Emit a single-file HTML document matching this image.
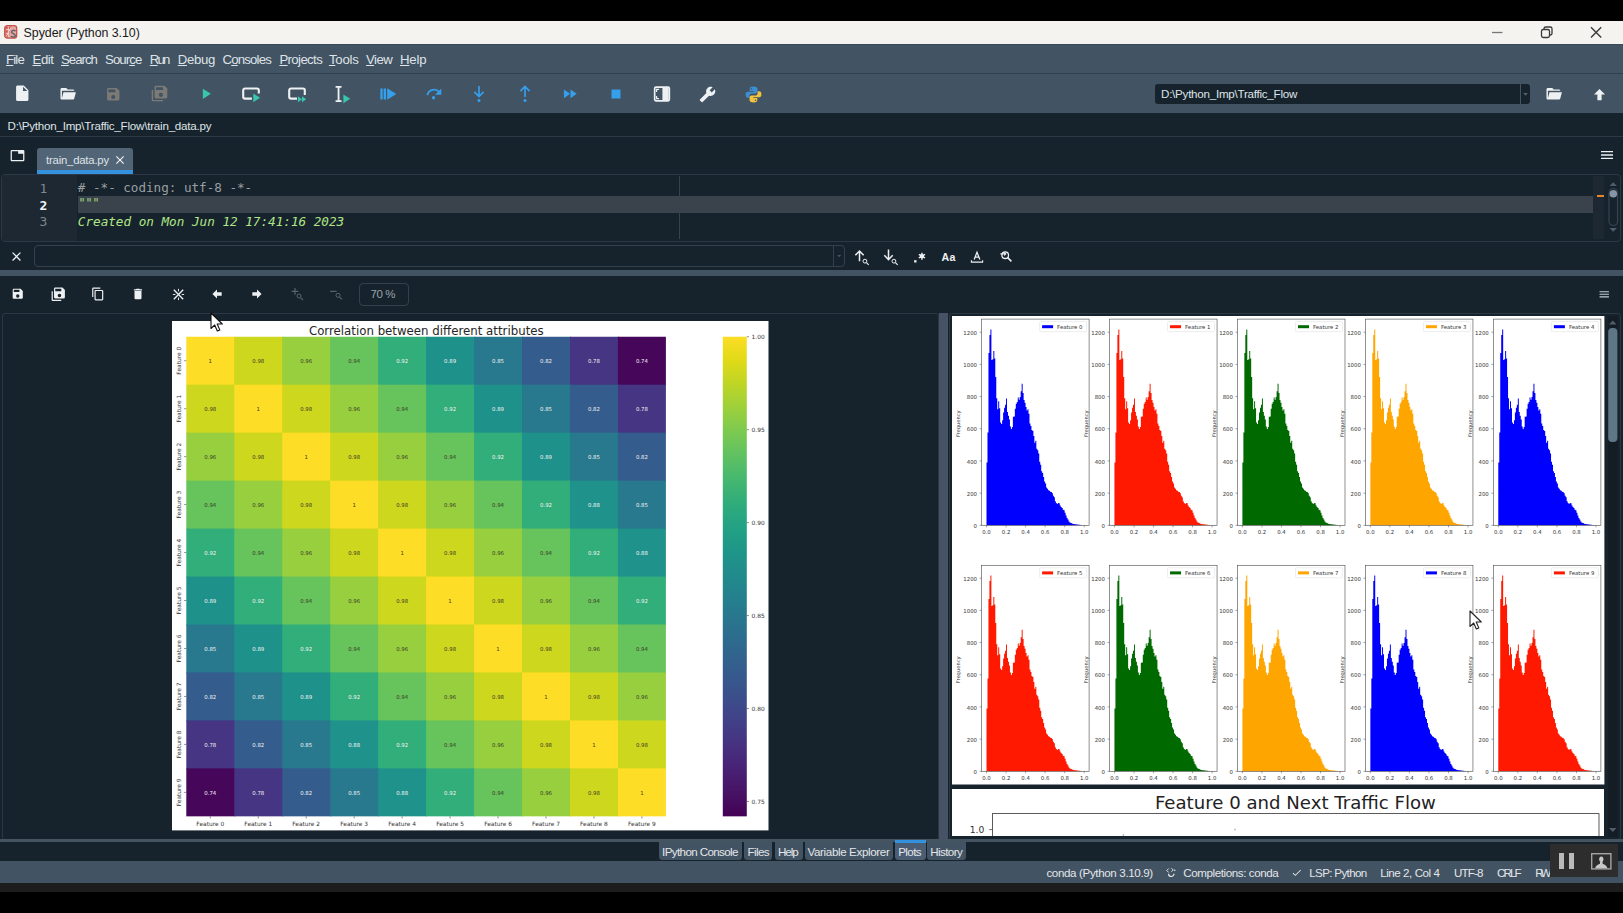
<!DOCTYPE html><html><head><meta charset="utf-8"><title>Spyder (Python 3.10)</title><style>
*{box-sizing:border-box;margin:0;padding:0}
html,body{width:1623px;height:913px;overflow:hidden;background:#000}
body{position:relative;font-family:'Liberation Sans', 'DejaVu Sans', sans-serif;font-size:12px;color:#e0e1e3}
.abs{position:absolute}
.t{position:absolute;white-space:nowrap;line-height:1}
svg{position:absolute;overflow:visible}
u{text-decoration:underline;text-underline-offset:1px}
</style></head><body><div class="abs" style="left:0px;top:20.6px;width:1623px;height:23.7px;background:#f4f3f0;"></div><div class="abs" style="left:0px;top:43.6px;width:1623px;height:0.9px;background:#fdfdfc;"></div><div class="abs" style="left:0px;top:44.3px;width:1623px;height:29.7px;background:#425363;"></div><div class="abs" style="left:0px;top:44.3px;width:1623px;height:1.2px;background:#3b4957;"></div><div class="abs" style="left:0px;top:73px;width:1623px;height:1.4px;background:#30404f;"></div><div class="abs" style="left:0px;top:74.4px;width:1623px;height:38.7px;background:#425363;"></div><div class="abs" style="left:0px;top:113px;width:1623px;height:748.5px;background:#17232c;"></div><div class="abs" style="left:0px;top:860.8px;width:1623px;height:22.2px;background:#425363;"></div><div class="abs" style="left:0px;top:883px;width:1623px;height:9px;background:#1d1d1d;"></div><div class="t" style="left:23.6px;top:26.7px;font-size:12.4px;color:#1a1a1a;letter-spacing:-0.046px;">Spyder (Python 3.10)</div><svg style="left:3.5px;top:25px" width="13.4" height="13.8" viewBox="0 0 13.4 13.8"><rect x="0.7" y="0.7" width="12" height="12.4" rx="2.6" fill="#e9a9a3" stroke="#c4514b" stroke-width="1.3"/><path d="M1.4 1.4H8.5L6.5 4.5L4.2 12.4H1.4Z" fill="#cf5a53"/><path d="M2 4.6H6M2 8.3H5M4.3 1.6V12M7.5 1.8L2.2 11.5" fill="none" stroke="#f6dcd9" stroke-width="0.9"/><path d="M11.6 6.1C9.6 4.6 7.200 5.4 7.600 7.200C8 9 11.400 8.600 11.300 10.600C11.200 12.300 8.500 12.500 6.800 11.200" fill="none" stroke="#666" stroke-width="1.500"/></svg><svg style="left:1480px;top:20px" width="143" height="24" viewBox="0 0 143 24" fill="none" stroke="#3a3a3a" stroke-width="1.3"><path d="M12 12.5H22.5" stroke="#777"/><rect x="61.5" y="9.5" width="8" height="8" rx="1.8"/><path d="M64 9.3V8.8A1.8 1.8 0 0 1 65.8 7H70.2A1.8 1.8 0 0 1 72 8.8V13.2A1.8 1.8 0 0 1 70.2 15H69.7"/><path d="M111 7.2L121.2 17.4M121.2 7.2L111 17.4" stroke-width="1.4"/></svg><div class="t" style="left:6.1px;top:52.9px;font-size:13.2px;color:#dfe3e7;letter-spacing:-0.857px;"><u>F</u>ile</div><div class="t" style="left:32.5px;top:52.9px;font-size:13.2px;color:#dfe3e7;letter-spacing:-0.415px;"><u>E</u>dit</div><div class="t" style="left:61px;top:52.9px;font-size:13.2px;color:#dfe3e7;letter-spacing:-0.985px;"><u>S</u>earch</div><div class="t" style="left:105px;top:52.9px;font-size:13.2px;color:#dfe3e7;letter-spacing:-0.905px;">Sour<u>c</u>e</div><div class="t" style="left:149.8px;top:52.9px;font-size:13.2px;color:#dfe3e7;letter-spacing:-1.808px;"><u>R</u>un</div><div class="t" style="left:177.8px;top:52.9px;font-size:13.2px;color:#dfe3e7;letter-spacing:-0.350px;"><u>D</u>ebug</div><div class="t" style="left:222.5px;top:52.9px;font-size:13.2px;color:#dfe3e7;letter-spacing:-0.805px;">C<u>o</u>nsoles</div><div class="t" style="left:279.4px;top:52.9px;font-size:13.2px;color:#dfe3e7;letter-spacing:-0.612px;"><u>P</u>rojects</div><div class="t" style="left:328.9px;top:52.9px;font-size:13.2px;color:#dfe3e7;letter-spacing:-0.179px;"><u>T</u>ools</div><div class="t" style="left:366.1px;top:52.9px;font-size:13.2px;color:#dfe3e7;letter-spacing:-0.558px;"><u>V</u>iew</div><div class="t" style="left:400px;top:52.9px;font-size:13.2px;color:#dfe3e7;letter-spacing:-0.216px;"><u>H</u>elp</div><svg style="left:12.75px;top:84.45px" width="18.5" height="18.5" viewBox="0 0 24 24"><path d="M13,9V3.5L18.5,9M6,2C4.89,2 4,2.89 4,4V20A2,2 0 0,0 6,22H18A2,2 0 0,0 20,20V8L14,2H6Z" fill="#eef1f3" /></svg><svg style="left:59.25px;top:85.25px" width="17.5" height="17.5" viewBox="0 0 24 24"><path d="M19,20H4C2.89,20 2,19.1 2,18V6C2,4.89 2.89,4 4,4H10L12,6H19A2,2 0 0,1 21,8H21L4,8V18L6.14,10H23.21L20.93,18.5C20.7,19.37 19.92,20 19,20Z" fill="#eef1f3" /></svg><svg style="left:104.75px;top:85.75px" width="16.5" height="16.5" viewBox="0 0 24 24"><path d="M15,9H5V5H15M12,19A3,3 0 0,1 9,16A3,3 0 0,1 12,13A3,3 0 0,1 15,16A3,3 0 0,1 12,19M17,3H5C3.89,3 3,3.9 3,5V19A2,2 0 0,0 5,21H19A2,2 0 0,0 21,19V7L17,3Z" fill="#7b7a75" /></svg><svg style="left:150.5px;top:85px" width="17" height="17" viewBox="0 0 24 24"><path d="M17,7V3H7V7H17M14,17A3,3 0 0,0 17,14A3,3 0 0,0 14,11A3,3 0 0,0 11,14A3,3 0 0,0 14,17M19,1L23,5V17A2,2 0 0,1 21,19H7C5.89,19 5,18.1 5,17V3A2,2 0 0,1 7,1H19M1,7H3V21H17V23H3A2,2 0 0,1 1,21V7Z" fill="#7b7a75" /></svg><svg style="left:196.55px;top:85.25px" width="17.5" height="17.5" viewBox="0 0 24 24"><path d="M8,5.14V19.14L19,12.14L8,5.14Z" fill="#38c6ad" /></svg><svg style="left:240px;top:83px" width="22" height="22" viewBox="0 0 24 24"><path d="M13 17H5.5A2 2 0 0 1 3.5 15V8A2 2 0 0 1 5.5 6H18.5A2 2 0 0 1 20.5 8V11.5" fill="none" stroke="#eef1f3" stroke-width="2.3"/><path d="M14.5 11.5V21L22 16.2Z" fill="#38c6ad"/></svg><svg style="left:286px;top:83px" width="22" height="22" viewBox="0 0 24 24"><path d="M12 17H5.5A2 2 0 0 1 3.5 15V8A2 2 0 0 1 5.5 6H18.5A2 2 0 0 1 20.5 8V13" fill="none" stroke="#eef1f3" stroke-width="2.3"/><path d="M13 14.5V21L17.5 17.7ZM17.5 14.5V21L22 17.7Z" fill="#38c6ad"/></svg><svg style="left:331px;top:83px" width="22" height="22" viewBox="0 0 24 24"><path d="M5 4.2H11.5M5 19.8H11.5M8.25 4.2V19.8" fill="none" stroke="#eef1f3" stroke-width="2"/><path d="M13.5 12.5V22L21 17.2Z" fill="#38c6ad"/></svg><svg style="left:378px;top:84px" width="20" height="20" viewBox="0 0 24 24"><path d="M2.8 5.5H5.6V18.5H2.8ZM6.800 5.500H9.600V18.500H6.800ZM11 5V19L22 12Z" fill="#369fec"/></svg><svg style="left:424px;top:84px" width="20" height="20" viewBox="0 0 24 24"><path d="M4 13.5A8.2 8.2 0 0 1 18.5 10" fill="none" stroke="#369fec" stroke-width="2"/><path d="M20.8 5.5V13H13.3Z" fill="#369fec"/><circle cx="11.5" cy="16.5" r="2" fill="#369fec"/></svg><svg style="left:469px;top:84px" width="20" height="20" viewBox="0 0 24 24"><path d="M12 2.5V14.5M6.5 9.5L12 15L17.5 9.5" fill="none" stroke="#369fec" stroke-width="2"/><circle cx="12" cy="19.7" r="1.8" fill="#369fec"/></svg><svg style="left:515px;top:84px" width="20" height="20" viewBox="0 0 24 24"><path d="M12 15.5V3.5M6.5 8.5L12 3L17.5 8.5" fill="none" stroke="#369fec" stroke-width="2"/><circle cx="12" cy="19.7" r="1.8" fill="#369fec"/></svg><svg style="left:560.75px;top:85.25px" width="17.5" height="17.5" viewBox="0 0 24 24"><path d="M13,6V18L21.5,12M4,18L12.5,12L4,6V18Z" fill="#369fec" /></svg><svg style="left:607px;top:85px" width="18" height="18" viewBox="0 0 24 24"><path d="M18,18H6V6H18V18Z" fill="#369fec" /></svg><svg style="left:652px;top:84px" width="20" height="20" viewBox="0 0 24 24"><rect x="3.2" y="3.8" width="17.6" height="16.4" rx="1.5" fill="none" stroke="#eef1f3" stroke-width="2"/><path d="M12.5 4H20V20H12.5Z" fill="#eef1f3"/><path d="M5.5 9.5V6.5H8.5M5.5 14.5V17.5H8.5" fill="none" stroke="#eef1f3" stroke-width="1.4"/></svg><svg style="left:698.5px;top:85.5px" width="17" height="17" viewBox="0 0 24 24"><g transform="translate(24,0) scale(-1,1)"><path d="M22.7,19L13.6,9.9C14.5,7.6 14,4.9 12.1,3C10.1,1 7.1,0.6 4.7,1.7L9,6L6,9L1.6,4.7C0.4,7.1 0.9,10.1 2.9,12.1C4.8,14 7.5,14.5 9.8,13.6L18.9,22.7C19.3,23.1 19.9,23.1 20.3,22.7L22.6,20.4C23.1,20 23.1,19.3 22.7,19Z" fill="#eef1f3" /></g></svg><svg style="left:743.5px;top:84.5px" width="19" height="19" viewBox="0 0 24 24"><path d="M11.8 2C8 2 7.2 3.4 7.2 5.2V7.6H12.2V8.6H4.8C3 8.600 2 10.2 2 12.4C2 14.6 3 16.200 4.800 16.200H6.800V13.6C6.800 11.8 8.200 10.600 10 10.600H14.6C16 10.600 17 9.600 17 8.200V5.200C17 3.400 15.600 2 11.800 2Z" fill="#3d8fd1"/><path d="M12.200 22C16 22 16.800 20.600 16.800 18.800V16.400H11.800V15.400H19.200C21 15.400 22 13.800 22 11.600C22 9.400 21 7.800 19.200 7.800H17.200V10.400C17.200 12.200 15.800 13.400 14 13.400H9.400C8 13.400 7 14.400 7 15.800V18.800C7 20.600 8.400 22 12.200 22Z" fill="#f2c33c"/><circle cx="9.500" cy="4.800" r="0.900" fill="#455364"/><circle cx="14.500" cy="19.200" r="0.900" fill="#455364"/></svg><div class="abs" style="left:1154.8px;top:83.5px;width:375.7px;height:20.5px;background:#17232c;border-radius:3px"></div><div class="abs" style="left:1520px;top:84px;width:1px;height:19.5px;background:#455364;"></div><svg style="left:1523px;top:92.5px" width="5" height="3" viewBox="0 0 6 4"><path d="M0 0H6L3 3.6Z" fill="#566371"/></svg><div class="t" style="left:1161px;top:88.2px;font-size:11.6px;color:#dfe3e7;letter-spacing:-0.243px;">D:\Python_Imp\Traffic_Flow</div><svg style="left:1545.25px;top:85.25px" width="17.5" height="17.5" viewBox="0 0 24 24"><path d="M19,20H4C2.89,20 2,19.1 2,18V6C2,4.89 2.89,4 4,4H10L12,6H19A2,2 0 0,1 21,8H21L4,8V18L6.14,10H23.21L20.93,18.5C20.7,19.37 19.92,20 19,20Z" fill="#eef1f3" /></svg><svg style="left:1590.5px;top:86px" width="17" height="17" viewBox="0 0 24 24"><path d="M15,20H9V12H4.16L12,4.16L19.84,12H15V20Z" fill="#eef1f3" /></svg><div class="t" style="left:7.5px;top:120px;font-size:11.6px;color:#dfe3e7;letter-spacing:-0.220px;">D:\Python_Imp\Traffic_Flow\train_data.py</div><div class="abs" style="left:0px;top:136px;width:1623px;height:1px;background:#2c3844;"></div><svg style="left:10px;top:147.5px" width="15" height="15" viewBox="0 0 24 24"><path d="M3,3H21A2,2 0 0,1 23,5V19A2,2 0 0,1 21,21H3A2,2 0 0,1 1,19V5A2,2 0 0,1 3,3M3,5V19H21V9H13V5H3Z" fill="#eef1f3" /></svg><div class="abs" style="left:37.2px;top:148px;width:95.8px;height:25.8px;background:#526577;border-radius:3px 3px 0 0"></div><div class="abs" style="left:37.2px;top:169.8px;width:95.8px;height:4px;background:#3391de;"></div><div class="t" style="left:46px;top:154.65px;font-size:11.3px;color:#dfe3e7;letter-spacing:-0.186px;">train_data.py</div><svg style="left:113px;top:153px" width="14" height="14" viewBox="0 0 24 24"><path d="M19,6.41L17.59,5L12,10.59L6.41,5L5,6.41L10.59,12L5,17.59L6.41,19L12,13.41L17.59,19L19,17.59L13.41,12L19,6.41Z" fill="#eef1f3" /></svg><svg style="left:1599px;top:147px" width="16" height="16" viewBox="0 0 24 24"><path d="M3,6H21V8H3V6M3,11H21V13H3V11M3,16H21V18H3V16Z" fill="#eef1f3" /></svg><div class="abs" style="left:1px;top:173.8px;width:1619.5px;height:67.8px;background:#17232c;border:1px solid #2c3945;border-radius:4px"></div><div class="abs" style="left:2px;top:174.8px;width:74.8px;height:65.8px;background:#1d2832;border-radius:3px 0 0 3px"></div><div class="abs" style="left:77.5px;top:196px;width:1515.5px;height:17.2px;background:#3a434b;"></div><div class="abs" style="left:1593.3px;top:176px;width:11.2px;height:63px;background:#1e2832;"></div><div class="abs" style="left:1596.5px;top:195px;width:7px;height:2.2px;background:#e8862c;"></div><div class="abs" style="left:679px;top:176px;width:1px;height:63px;background:#37424d;"></div><svg style="left:1606px;top:177px" width="14" height="62" viewBox="0 0 14 62"><path d="M3.5 9L7.2 5.2L10.900 9Z" fill="#4f5d6b"/><path d="M3.500 51L7.200 54.800L10.900 51Z" fill="#4f5d6b"/><rect x="3" y="11.500" width="8.600" height="37" rx="4" fill="none" stroke="#3c4956" stroke-width="1"/><circle cx="7.300" cy="16.800" r="3.800" fill="#8595a4"/></svg><div class="t" style="left:39.5px;top:181.8px;font-size:13px;color:#7d8791;font-family:'DejaVu Sans Mono', 'Liberation Mono', monospace;font-weight:normal">1</div><div class="t" style="left:39.5px;top:198.5px;font-size:13px;color:#f4f6f7;font-family:'DejaVu Sans Mono', 'Liberation Mono', monospace;font-weight:bold">2</div><div class="t" style="left:39.5px;top:215.4px;font-size:13px;color:#7d8791;font-family:'DejaVu Sans Mono', 'Liberation Mono', monospace;font-weight:normal">3</div><div class="t" style="left:77.8px;top:182.3px;font-size:12.6px;color:#9a9fa3;font-family:'DejaVu Sans Mono', 'Liberation Mono', monospace;"># -*- coding: utf-8 -*-</div><div class="t" style="left:78.5px;top:197.8px;font-size:11.6px;color:#a4d77d;font-family:'DejaVu Sans Mono', 'Liberation Mono', monospace;font-style:italic">&quot;&quot;&quot;</div><div class="t" style="left:77.8px;top:215.875px;font-size:12.65px;color:#b0e686;font-family:'DejaVu Sans Mono', 'Liberation Mono', monospace;font-style:italic">Created on Mon Jun 12 17:41:16 2023</div><svg style="left:8.5px;top:249px" width="15" height="15" viewBox="0 0 24 24"><path d="M19,6.41L17.59,5L12,10.59L6.41,5L5,6.41L10.59,12L5,17.59L6.41,19L12,13.41L17.59,19L19,17.59L13.41,12L19,6.41Z" fill="#eef1f3" /></svg><div class="abs" style="left:34px;top:245px;width:811px;height:22px;background:#17232c;border:1px solid #33404d;border-radius:4px"></div><div class="abs" style="left:833px;top:246px;width:1px;height:20px;background:#33404d;"></div><svg style="left:837.2px;top:255.3px" width="4.4" height="2.6" viewBox="0 0 6 4"><path d="M0 0H6L3 3.600Z" fill="#4b5764"/></svg><svg style="left:851.5px;top:246.5px" width="20" height="20" viewBox="0 0 24 24"><path d="M9 17V5M4 10L9 4.800L14 10" fill="none" stroke="#eef1f3" stroke-width="1.800"/><circle cx="15.500" cy="17" r="2.300" fill="none" stroke="#eef1f3" stroke-width="1.200"/><path d="M17.300 18.800L20 21.500" stroke="#eef1f3" stroke-width="1.300"/></svg><svg style="left:880.5px;top:246.5px" width="20" height="20" viewBox="0 0 24 24"><path d="M9 3V15M4 10L9 15.200L14 10" fill="none" stroke="#eef1f3" stroke-width="1.800"/><circle cx="15.500" cy="17" r="2.300" fill="none" stroke="#eef1f3" stroke-width="1.200"/><path d="M17.300 18.800L20 21.500" stroke="#eef1f3" stroke-width="1.300"/></svg><svg style="left:910px;top:246.5px" width="20" height="20" viewBox="0 0 24 24"><circle cx="14.300" cy="11" r="2.600" fill="#eef1f3"/><path d="M14.300 6.800V15.200M10.600 8.900L18 13.100M10.600 13.100L18 8.900" stroke="#eef1f3" stroke-width="1.700"/><rect x="5" y="15.800" width="2.800" height="2.800" fill="#eef1f3"/></svg><div class="t" style="left:941.6px;top:251.7px;font-size:10.6px;color:#eef1f3;font-weight:bold;letter-spacing:0.200px">Aa</div><svg style="left:967px;top:246.5px" width="20" height="20" viewBox="0 0 24 24"><path d="M5.300 15.800V18.200H18.700V15.800" fill="none" stroke="#eef1f3" stroke-width="1.400"/><path d="M8.600 15L12 6.300L15.400 15M9.800 12.200H14.200" fill="none" stroke="#eef1f3" stroke-width="1.500"/></svg><svg style="left:998.25px;top:247.75px" width="16.5" height="16.5" viewBox="0 0 24 24"><circle cx="10.500" cy="10.500" r="4.800" fill="none" stroke="#eef1f3" stroke-width="1.900"/><path d="M14 14L19.500 19.500" stroke="#eef1f3" stroke-width="2.200"/><path d="M3.500 7.500H9V5L12.500 8.500L9 12V9.500H3.500Z" fill="#eef1f3"/></svg><div class="abs" style="left:0px;top:270.4px;width:1623px;height:6px;background:#425363;"></div><svg style="left:11.25px;top:287.25px" width="13.5" height="13.5" viewBox="0 0 24 24"><path d="M15,9H5V5H15M12,19A3,3 0 0,1 9,16A3,3 0 0,1 12,13A3,3 0 0,1 15,16A3,3 0 0,1 12,19M17,3H5C3.89,3 3,3.9 3,5V19A2,2 0 0,0 5,21H19A2,2 0 0,0 21,19V7L17,3Z" fill="#eef1f3" /></svg><svg style="left:50.75px;top:286.75px" width="14.5" height="14.5" viewBox="0 0 24 24"><path d="M17,7V3H7V7H17M14,17A3,3 0 0,0 17,14A3,3 0 0,0 14,11A3,3 0 0,0 11,14A3,3 0 0,0 14,17M19,1L23,5V17A2,2 0 0,1 21,19H7C5.89,19 5,18.1 5,17V3A2,2 0 0,1 7,1H19M1,7H3V21H17V23H3A2,2 0 0,1 1,21V7Z" fill="#eef1f3" /></svg><svg style="left:91px;top:287px" width="14" height="14" viewBox="0 0 24 24"><path d="M19,21H8V7H19M19,5H8A2,2 0 0,0 6,7V21A2,2 0 0,0 8,23H19A2,2 0 0,0 21,21V7A2,2 0 0,0 19,5M16,1H4A2,2 0 0,0 2,3V17H4V3H16V1Z" fill="#eef1f3" /></svg><svg style="left:131px;top:287px" width="14" height="14" viewBox="0 0 24 24"><path d="M19,4H15.5L14.5,3H9.5L8.5,4H5V6H19M6,19A2,2 0 0,0 8,21H16A2,2 0 0,0 18,19V7H6V19Z" fill="#eef1f3" /></svg><svg style="left:170.5px;top:286.5px" width="15" height="15" viewBox="0 0 24 24"><path d="M4.500 4.500L19.500 19.500M19.500 4.500L4.500 19.500" stroke="#eef1f3" stroke-width="2.200"/><path d="M12 3V7M12 17V21M3 12H7M17 12H21" stroke="#eef1f3" stroke-width="1.500"/></svg><svg style="left:210px;top:287px" width="14" height="14" viewBox="0 0 24 24"><path d="M20,9V15H12V19.84L4.16,12L12,4.16V9H20Z" fill="#eef1f3" /></svg><svg style="left:250px;top:287px" width="14" height="14" viewBox="0 0 24 24"><path d="M4,15V9H12V4.16L19.84,12L12,19.84V15H4Z" fill="#eef1f3" /></svg><svg style="left:289px;top:286px" width="16" height="16" viewBox="0 0 24 24"><path d="M9 3V13M4 8H14" stroke="#58636e" stroke-width="1.800"/><circle cx="15" cy="15" r="3" fill="none" stroke="#58636e" stroke-width="1.500"/><path d="M17.300 17.300L21 21" stroke="#58636e" stroke-width="1.700"/></svg><svg style="left:328px;top:286px" width="16" height="16" viewBox="0 0 24 24"><path d="M3 8H13" stroke="#58636e" stroke-width="1.800"/><circle cx="15" cy="14" r="3" fill="none" stroke="#58636e" stroke-width="1.500"/><path d="M17.300 16.300L21 20" stroke="#58636e" stroke-width="1.700"/></svg><div class="abs" style="left:359px;top:283px;width:49.5px;height:22.5px;background:#17232c;border:1px solid #33404d;border-radius:4px"></div><div class="t" style="left:370.6px;top:288.75px;font-size:11.5px;color:#98a2ac;letter-spacing:-0.471px;">70 %</div><svg style="left:1597.75px;top:287.75px" width="12.5" height="12.5" viewBox="0 0 24 24"><path d="M3,6H21V8H3V6M3,11H21V13H3V11M3,16H21V18H3V16Z" fill="#c5cbd1" /></svg><div class="abs" style="left:2px;top:312.5px;width:936.5px;height:527px;background:#17232c;border:1px solid #2b3743;border-radius:3px"></div><div class="abs" style="left:938.5px;top:313px;width:9px;height:526px;background:#455364;"></div><div class="abs" style="left:948.5px;top:312.5px;width:1672px;height:527px;background:#17232c;border:1px solid #2b3743;border-radius:3px;width:672px"></div><svg style="left:172.2px;top:321.4px" width="596.5" height="509.4" viewBox="0 0 596.5 509.4" font-family="'DejaVu Sans', 'Liberation Sans', sans-serif"><defs><linearGradient id="vir" x1="0" y1="1" x2="0" y2="0"><stop offset="0" stop-color="#440154"/><stop offset="0.05" stop-color="#471265"/><stop offset="0.1" stop-color="#482275"/><stop offset="0.15" stop-color="#463280"/><stop offset="0.2" stop-color="#414187"/><stop offset="0.25" stop-color="#3b4f8b"/><stop offset="0.3" stop-color="#355b8d"/><stop offset="0.35" stop-color="#2f678e"/><stop offset="0.4" stop-color="#2a738e"/><stop offset="0.45" stop-color="#257f8e"/><stop offset="0.5" stop-color="#218a8c"/><stop offset="0.55" stop-color="#1e9589"/><stop offset="0.6" stop-color="#22a184"/><stop offset="0.65" stop-color="#2fac7c"/><stop offset="0.7" stop-color="#44b770"/><stop offset="0.75" stop-color="#5ec162"/><stop offset="0.8" stop-color="#7ac951"/><stop offset="0.85" stop-color="#9bd03c"/><stop offset="0.9" stop-color="#bdd526"/><stop offset="0.95" stop-color="#dfda18"/><stop offset="1" stop-color="#fddd25"/></linearGradient></defs><rect x="0" y="0" width="596.5" height="509.4" fill="#fff"/><rect x="14.30" y="15.75" width="48.96" height="48.96" fill="#fddd25"/><rect x="62.26" y="15.75" width="48.96" height="48.96" fill="#cdd71d"/><rect x="110.22" y="15.75" width="48.96" height="48.96" fill="#98cf3e"/><rect x="158.18" y="15.75" width="48.96" height="48.96" fill="#67c35c"/><rect x="206.14" y="15.75" width="48.96" height="48.96" fill="#32ae7a"/><rect x="254.10" y="15.75" width="48.96" height="48.96" fill="#1f918b"/><rect x="302.06" y="15.75" width="48.96" height="48.96" fill="#28788e"/><rect x="350.02" y="15.75" width="48.96" height="48.96" fill="#345c8d"/><rect x="397.98" y="15.75" width="48.96" height="48.96" fill="#453582"/><rect x="445.94" y="15.75" width="47.96" height="48.96" fill="#46065a"/><rect x="14.30" y="63.71" width="48.96" height="48.96" fill="#cdd71d"/><rect x="62.26" y="63.71" width="48.96" height="48.96" fill="#fddd25"/><rect x="110.22" y="63.71" width="48.96" height="48.96" fill="#cdd71d"/><rect x="158.18" y="63.71" width="48.96" height="48.96" fill="#98cf3e"/><rect x="206.14" y="63.71" width="48.96" height="48.96" fill="#67c35c"/><rect x="254.10" y="63.71" width="48.96" height="48.96" fill="#32ae7a"/><rect x="302.06" y="63.71" width="48.96" height="48.96" fill="#1f918b"/><rect x="350.02" y="63.71" width="48.96" height="48.96" fill="#28788e"/><rect x="397.98" y="63.71" width="48.96" height="48.96" fill="#345c8d"/><rect x="445.94" y="63.71" width="47.96" height="48.96" fill="#453582"/><rect x="14.30" y="111.67" width="48.96" height="48.96" fill="#98cf3e"/><rect x="62.26" y="111.67" width="48.96" height="48.96" fill="#cdd71d"/><rect x="110.22" y="111.67" width="48.96" height="48.96" fill="#fddd25"/><rect x="158.18" y="111.67" width="48.96" height="48.96" fill="#cdd71d"/><rect x="206.14" y="111.67" width="48.96" height="48.96" fill="#98cf3e"/><rect x="254.10" y="111.67" width="48.96" height="48.96" fill="#67c35c"/><rect x="302.06" y="111.67" width="48.96" height="48.96" fill="#32ae7a"/><rect x="350.02" y="111.67" width="48.96" height="48.96" fill="#1f918b"/><rect x="397.98" y="111.67" width="48.96" height="48.96" fill="#28788e"/><rect x="445.94" y="111.67" width="47.96" height="48.96" fill="#345c8d"/><rect x="14.30" y="159.63" width="48.96" height="48.96" fill="#67c35c"/><rect x="62.26" y="159.63" width="48.96" height="48.96" fill="#98cf3e"/><rect x="110.22" y="159.63" width="48.96" height="48.96" fill="#cdd71d"/><rect x="158.18" y="159.63" width="48.96" height="48.96" fill="#fddd25"/><rect x="206.14" y="159.63" width="48.96" height="48.96" fill="#cdd71d"/><rect x="254.10" y="159.63" width="48.96" height="48.96" fill="#98cf3e"/><rect x="302.06" y="159.63" width="48.96" height="48.96" fill="#67c35c"/><rect x="350.02" y="159.63" width="48.96" height="48.96" fill="#32ae7a"/><rect x="397.98" y="159.63" width="48.96" height="48.96" fill="#1f928b"/><rect x="445.94" y="159.63" width="47.96" height="48.96" fill="#28788e"/><rect x="14.30" y="207.59" width="48.96" height="48.96" fill="#32ae7a"/><rect x="62.26" y="207.59" width="48.96" height="48.96" fill="#67c35c"/><rect x="110.22" y="207.59" width="48.96" height="48.96" fill="#98cf3e"/><rect x="158.18" y="207.59" width="48.96" height="48.96" fill="#cdd71d"/><rect x="206.14" y="207.59" width="48.96" height="48.96" fill="#fddd25"/><rect x="254.10" y="207.59" width="48.96" height="48.96" fill="#cdd71d"/><rect x="302.06" y="207.59" width="48.96" height="48.96" fill="#98cf3e"/><rect x="350.02" y="207.59" width="48.96" height="48.96" fill="#67c35c"/><rect x="397.98" y="207.59" width="48.96" height="48.96" fill="#32ae7a"/><rect x="445.94" y="207.59" width="47.96" height="48.96" fill="#1f928b"/><rect x="14.30" y="255.55" width="48.96" height="48.96" fill="#1f918b"/><rect x="62.26" y="255.55" width="48.96" height="48.96" fill="#32ae7a"/><rect x="110.22" y="255.55" width="48.96" height="48.96" fill="#67c35c"/><rect x="158.18" y="255.55" width="48.96" height="48.96" fill="#98cf3e"/><rect x="206.14" y="255.55" width="48.96" height="48.96" fill="#cdd71d"/><rect x="254.10" y="255.55" width="48.96" height="48.96" fill="#fddd25"/><rect x="302.06" y="255.55" width="48.96" height="48.96" fill="#cdd71d"/><rect x="350.02" y="255.55" width="48.96" height="48.96" fill="#98cf3e"/><rect x="397.98" y="255.55" width="48.96" height="48.96" fill="#67c35c"/><rect x="445.94" y="255.55" width="47.96" height="48.96" fill="#32ae7a"/><rect x="14.30" y="303.51" width="48.96" height="48.96" fill="#28788e"/><rect x="62.26" y="303.51" width="48.96" height="48.96" fill="#1f918b"/><rect x="110.22" y="303.51" width="48.96" height="48.96" fill="#32ae7a"/><rect x="158.18" y="303.51" width="48.96" height="48.96" fill="#67c35c"/><rect x="206.14" y="303.51" width="48.96" height="48.96" fill="#98cf3e"/><rect x="254.10" y="303.51" width="48.96" height="48.96" fill="#cdd71d"/><rect x="302.06" y="303.51" width="48.96" height="48.96" fill="#fddd25"/><rect x="350.02" y="303.51" width="48.96" height="48.96" fill="#cdd71d"/><rect x="397.98" y="303.51" width="48.96" height="48.96" fill="#98cf3e"/><rect x="445.94" y="303.51" width="47.96" height="48.96" fill="#67c35c"/><rect x="14.30" y="351.47" width="48.96" height="48.96" fill="#345c8d"/><rect x="62.26" y="351.47" width="48.96" height="48.96" fill="#28788e"/><rect x="110.22" y="351.47" width="48.96" height="48.96" fill="#1f918b"/><rect x="158.18" y="351.47" width="48.96" height="48.96" fill="#32ae7a"/><rect x="206.14" y="351.47" width="48.96" height="48.96" fill="#67c35c"/><rect x="254.10" y="351.47" width="48.96" height="48.96" fill="#98cf3e"/><rect x="302.06" y="351.47" width="48.96" height="48.96" fill="#cdd71d"/><rect x="350.02" y="351.47" width="48.96" height="48.96" fill="#fddd25"/><rect x="397.98" y="351.47" width="48.96" height="48.96" fill="#cdd71d"/><rect x="445.94" y="351.47" width="47.96" height="48.96" fill="#98cf3e"/><rect x="14.30" y="399.43" width="48.96" height="48.96" fill="#453582"/><rect x="62.26" y="399.43" width="48.96" height="48.96" fill="#345c8d"/><rect x="110.22" y="399.43" width="48.96" height="48.96" fill="#28788e"/><rect x="158.18" y="399.43" width="48.96" height="48.96" fill="#1f928b"/><rect x="206.14" y="399.43" width="48.96" height="48.96" fill="#32ae7a"/><rect x="254.10" y="399.43" width="48.96" height="48.96" fill="#67c35c"/><rect x="302.06" y="399.43" width="48.96" height="48.96" fill="#98cf3e"/><rect x="350.02" y="399.43" width="48.96" height="48.96" fill="#cdd71d"/><rect x="397.98" y="399.43" width="48.96" height="48.96" fill="#fddd25"/><rect x="445.94" y="399.43" width="47.96" height="48.96" fill="#cdd71d"/><rect x="14.30" y="447.39" width="48.96" height="47.96" fill="#46065a"/><rect x="62.26" y="447.39" width="48.96" height="47.96" fill="#453582"/><rect x="110.22" y="447.39" width="48.96" height="47.96" fill="#345c8d"/><rect x="158.18" y="447.39" width="48.96" height="47.96" fill="#28788e"/><rect x="206.14" y="447.39" width="48.96" height="47.96" fill="#1f928b"/><rect x="254.10" y="447.39" width="48.96" height="47.96" fill="#32ae7a"/><rect x="302.06" y="447.39" width="48.96" height="47.96" fill="#67c35c"/><rect x="350.02" y="447.39" width="48.96" height="47.96" fill="#98cf3e"/><rect x="397.98" y="447.39" width="48.96" height="47.96" fill="#cdd71d"/><rect x="445.94" y="447.39" width="47.96" height="47.96" fill="#fddd25"/><text x="38.28" y="42.23" font-size="5.400" fill="#3a3a2a" text-anchor="middle">1</text><text x="86.24" y="42.23" font-size="5.400" fill="#3a3a2a" text-anchor="middle">0.98</text><text x="134.20" y="42.23" font-size="5.400" fill="#3a3a2a" text-anchor="middle">0.96</text><text x="182.16" y="42.23" font-size="5.400" fill="#3a3a2a" text-anchor="middle">0.94</text><text x="230.12" y="42.23" font-size="5.400" fill="#f4f4f4" text-anchor="middle">0.92</text><text x="278.08" y="42.23" font-size="5.400" fill="#f4f4f4" text-anchor="middle">0.89</text><text x="326.04" y="42.23" font-size="5.400" fill="#f4f4f4" text-anchor="middle">0.85</text><text x="374.00" y="42.23" font-size="5.400" fill="#f4f4f4" text-anchor="middle">0.82</text><text x="421.96" y="42.23" font-size="5.400" fill="#f4f4f4" text-anchor="middle">0.78</text><text x="469.92" y="42.23" font-size="5.400" fill="#f4f4f4" text-anchor="middle">0.74</text><text x="38.28" y="90.19" font-size="5.400" fill="#3a3a2a" text-anchor="middle">0.98</text><text x="86.24" y="90.19" font-size="5.400" fill="#3a3a2a" text-anchor="middle">1</text><text x="134.20" y="90.19" font-size="5.400" fill="#3a3a2a" text-anchor="middle">0.98</text><text x="182.16" y="90.19" font-size="5.400" fill="#3a3a2a" text-anchor="middle">0.96</text><text x="230.12" y="90.19" font-size="5.400" fill="#3a3a2a" text-anchor="middle">0.94</text><text x="278.08" y="90.19" font-size="5.400" fill="#f4f4f4" text-anchor="middle">0.92</text><text x="326.04" y="90.19" font-size="5.400" fill="#f4f4f4" text-anchor="middle">0.89</text><text x="374.00" y="90.19" font-size="5.400" fill="#f4f4f4" text-anchor="middle">0.85</text><text x="421.96" y="90.19" font-size="5.400" fill="#f4f4f4" text-anchor="middle">0.82</text><text x="469.92" y="90.19" font-size="5.400" fill="#f4f4f4" text-anchor="middle">0.78</text><text x="38.28" y="138.15" font-size="5.400" fill="#3a3a2a" text-anchor="middle">0.96</text><text x="86.24" y="138.15" font-size="5.400" fill="#3a3a2a" text-anchor="middle">0.98</text><text x="134.20" y="138.15" font-size="5.400" fill="#3a3a2a" text-anchor="middle">1</text><text x="182.16" y="138.15" font-size="5.400" fill="#3a3a2a" text-anchor="middle">0.98</text><text x="230.12" y="138.15" font-size="5.400" fill="#3a3a2a" text-anchor="middle">0.96</text><text x="278.08" y="138.15" font-size="5.400" fill="#3a3a2a" text-anchor="middle">0.94</text><text x="326.04" y="138.15" font-size="5.400" fill="#f4f4f4" text-anchor="middle">0.92</text><text x="374.00" y="138.15" font-size="5.400" fill="#f4f4f4" text-anchor="middle">0.89</text><text x="421.96" y="138.15" font-size="5.400" fill="#f4f4f4" text-anchor="middle">0.85</text><text x="469.92" y="138.15" font-size="5.400" fill="#f4f4f4" text-anchor="middle">0.82</text><text x="38.28" y="186.11" font-size="5.400" fill="#3a3a2a" text-anchor="middle">0.94</text><text x="86.24" y="186.11" font-size="5.400" fill="#3a3a2a" text-anchor="middle">0.96</text><text x="134.20" y="186.11" font-size="5.400" fill="#3a3a2a" text-anchor="middle">0.98</text><text x="182.16" y="186.11" font-size="5.400" fill="#3a3a2a" text-anchor="middle">1</text><text x="230.12" y="186.11" font-size="5.400" fill="#3a3a2a" text-anchor="middle">0.98</text><text x="278.08" y="186.11" font-size="5.400" fill="#3a3a2a" text-anchor="middle">0.96</text><text x="326.04" y="186.11" font-size="5.400" fill="#3a3a2a" text-anchor="middle">0.94</text><text x="374.00" y="186.11" font-size="5.400" fill="#f4f4f4" text-anchor="middle">0.92</text><text x="421.96" y="186.11" font-size="5.400" fill="#f4f4f4" text-anchor="middle">0.88</text><text x="469.92" y="186.11" font-size="5.400" fill="#f4f4f4" text-anchor="middle">0.85</text><text x="38.28" y="234.07" font-size="5.400" fill="#f4f4f4" text-anchor="middle">0.92</text><text x="86.24" y="234.07" font-size="5.400" fill="#3a3a2a" text-anchor="middle">0.94</text><text x="134.20" y="234.07" font-size="5.400" fill="#3a3a2a" text-anchor="middle">0.96</text><text x="182.16" y="234.07" font-size="5.400" fill="#3a3a2a" text-anchor="middle">0.98</text><text x="230.12" y="234.07" font-size="5.400" fill="#3a3a2a" text-anchor="middle">1</text><text x="278.08" y="234.07" font-size="5.400" fill="#3a3a2a" text-anchor="middle">0.98</text><text x="326.04" y="234.07" font-size="5.400" fill="#3a3a2a" text-anchor="middle">0.96</text><text x="374.00" y="234.07" font-size="5.400" fill="#3a3a2a" text-anchor="middle">0.94</text><text x="421.96" y="234.07" font-size="5.400" fill="#f4f4f4" text-anchor="middle">0.92</text><text x="469.92" y="234.07" font-size="5.400" fill="#f4f4f4" text-anchor="middle">0.88</text><text x="38.28" y="282.03" font-size="5.400" fill="#f4f4f4" text-anchor="middle">0.89</text><text x="86.24" y="282.03" font-size="5.400" fill="#f4f4f4" text-anchor="middle">0.92</text><text x="134.20" y="282.03" font-size="5.400" fill="#3a3a2a" text-anchor="middle">0.94</text><text x="182.16" y="282.03" font-size="5.400" fill="#3a3a2a" text-anchor="middle">0.96</text><text x="230.12" y="282.03" font-size="5.400" fill="#3a3a2a" text-anchor="middle">0.98</text><text x="278.08" y="282.03" font-size="5.400" fill="#3a3a2a" text-anchor="middle">1</text><text x="326.04" y="282.03" font-size="5.400" fill="#3a3a2a" text-anchor="middle">0.98</text><text x="374.00" y="282.03" font-size="5.400" fill="#3a3a2a" text-anchor="middle">0.96</text><text x="421.96" y="282.03" font-size="5.400" fill="#3a3a2a" text-anchor="middle">0.94</text><text x="469.92" y="282.03" font-size="5.400" fill="#f4f4f4" text-anchor="middle">0.92</text><text x="38.28" y="329.99" font-size="5.400" fill="#f4f4f4" text-anchor="middle">0.85</text><text x="86.24" y="329.99" font-size="5.400" fill="#f4f4f4" text-anchor="middle">0.89</text><text x="134.20" y="329.99" font-size="5.400" fill="#f4f4f4" text-anchor="middle">0.92</text><text x="182.16" y="329.99" font-size="5.400" fill="#3a3a2a" text-anchor="middle">0.94</text><text x="230.12" y="329.99" font-size="5.400" fill="#3a3a2a" text-anchor="middle">0.96</text><text x="278.08" y="329.99" font-size="5.400" fill="#3a3a2a" text-anchor="middle">0.98</text><text x="326.04" y="329.99" font-size="5.400" fill="#3a3a2a" text-anchor="middle">1</text><text x="374.00" y="329.99" font-size="5.400" fill="#3a3a2a" text-anchor="middle">0.98</text><text x="421.96" y="329.99" font-size="5.400" fill="#3a3a2a" text-anchor="middle">0.96</text><text x="469.92" y="329.99" font-size="5.400" fill="#3a3a2a" text-anchor="middle">0.94</text><text x="38.28" y="377.95" font-size="5.400" fill="#f4f4f4" text-anchor="middle">0.82</text><text x="86.24" y="377.95" font-size="5.400" fill="#f4f4f4" text-anchor="middle">0.85</text><text x="134.20" y="377.95" font-size="5.400" fill="#f4f4f4" text-anchor="middle">0.89</text><text x="182.16" y="377.95" font-size="5.400" fill="#f4f4f4" text-anchor="middle">0.92</text><text x="230.12" y="377.95" font-size="5.400" fill="#3a3a2a" text-anchor="middle">0.94</text><text x="278.08" y="377.95" font-size="5.400" fill="#3a3a2a" text-anchor="middle">0.96</text><text x="326.04" y="377.95" font-size="5.400" fill="#3a3a2a" text-anchor="middle">0.98</text><text x="374.00" y="377.95" font-size="5.400" fill="#3a3a2a" text-anchor="middle">1</text><text x="421.96" y="377.95" font-size="5.400" fill="#3a3a2a" text-anchor="middle">0.98</text><text x="469.92" y="377.95" font-size="5.400" fill="#3a3a2a" text-anchor="middle">0.96</text><text x="38.28" y="425.91" font-size="5.400" fill="#f4f4f4" text-anchor="middle">0.78</text><text x="86.24" y="425.91" font-size="5.400" fill="#f4f4f4" text-anchor="middle">0.82</text><text x="134.20" y="425.91" font-size="5.400" fill="#f4f4f4" text-anchor="middle">0.85</text><text x="182.16" y="425.91" font-size="5.400" fill="#f4f4f4" text-anchor="middle">0.88</text><text x="230.12" y="425.91" font-size="5.400" fill="#f4f4f4" text-anchor="middle">0.92</text><text x="278.08" y="425.91" font-size="5.400" fill="#3a3a2a" text-anchor="middle">0.94</text><text x="326.04" y="425.91" font-size="5.400" fill="#3a3a2a" text-anchor="middle">0.96</text><text x="374.00" y="425.91" font-size="5.400" fill="#3a3a2a" text-anchor="middle">0.98</text><text x="421.96" y="425.91" font-size="5.400" fill="#3a3a2a" text-anchor="middle">1</text><text x="469.92" y="425.91" font-size="5.400" fill="#3a3a2a" text-anchor="middle">0.98</text><text x="38.28" y="473.87" font-size="5.400" fill="#f4f4f4" text-anchor="middle">0.74</text><text x="86.24" y="473.87" font-size="5.400" fill="#f4f4f4" text-anchor="middle">0.78</text><text x="134.20" y="473.87" font-size="5.400" fill="#f4f4f4" text-anchor="middle">0.82</text><text x="182.16" y="473.87" font-size="5.400" fill="#f4f4f4" text-anchor="middle">0.85</text><text x="230.12" y="473.87" font-size="5.400" fill="#f4f4f4" text-anchor="middle">0.88</text><text x="278.08" y="473.87" font-size="5.400" fill="#f4f4f4" text-anchor="middle">0.92</text><text x="326.04" y="473.87" font-size="5.400" fill="#3a3a2a" text-anchor="middle">0.94</text><text x="374.00" y="473.87" font-size="5.400" fill="#3a3a2a" text-anchor="middle">0.96</text><text x="421.96" y="473.87" font-size="5.400" fill="#3a3a2a" text-anchor="middle">0.98</text><text x="469.92" y="473.87" font-size="5.400" fill="#3a3a2a" text-anchor="middle">1</text><text x="38.28" y="505.10" font-size="5.900" fill="#333" text-anchor="middle">Feature 0</text><text transform="translate(9.10 39.73) rotate(-90)" font-size="5.900" fill="#333" text-anchor="middle">Feature 0</text><path d="M14.30 39.73h-2.200M38.28 495.35v2.200" stroke="#444" stroke-width="0.600"/><text x="86.24" y="505.10" font-size="5.900" fill="#333" text-anchor="middle">Feature 1</text><text transform="translate(9.10 87.69) rotate(-90)" font-size="5.900" fill="#333" text-anchor="middle">Feature 1</text><path d="M14.30 87.69h-2.200M86.24 495.35v2.200" stroke="#444" stroke-width="0.600"/><text x="134.20" y="505.10" font-size="5.900" fill="#333" text-anchor="middle">Feature 2</text><text transform="translate(9.10 135.65) rotate(-90)" font-size="5.900" fill="#333" text-anchor="middle">Feature 2</text><path d="M14.30 135.65h-2.200M134.20 495.35v2.200" stroke="#444" stroke-width="0.600"/><text x="182.16" y="505.10" font-size="5.900" fill="#333" text-anchor="middle">Feature 3</text><text transform="translate(9.10 183.61) rotate(-90)" font-size="5.900" fill="#333" text-anchor="middle">Feature 3</text><path d="M14.30 183.61h-2.200M182.16 495.35v2.200" stroke="#444" stroke-width="0.600"/><text x="230.12" y="505.10" font-size="5.900" fill="#333" text-anchor="middle">Feature 4</text><text transform="translate(9.10 231.57) rotate(-90)" font-size="5.900" fill="#333" text-anchor="middle">Feature 4</text><path d="M14.30 231.57h-2.200M230.12 495.35v2.200" stroke="#444" stroke-width="0.600"/><text x="278.08" y="505.10" font-size="5.900" fill="#333" text-anchor="middle">Feature 5</text><text transform="translate(9.10 279.53) rotate(-90)" font-size="5.900" fill="#333" text-anchor="middle">Feature 5</text><path d="M14.30 279.53h-2.200M278.08 495.35v2.200" stroke="#444" stroke-width="0.600"/><text x="326.04" y="505.10" font-size="5.900" fill="#333" text-anchor="middle">Feature 6</text><text transform="translate(9.10 327.49) rotate(-90)" font-size="5.900" fill="#333" text-anchor="middle">Feature 6</text><path d="M14.30 327.49h-2.200M326.04 495.35v2.200" stroke="#444" stroke-width="0.600"/><text x="374.00" y="505.10" font-size="5.900" fill="#333" text-anchor="middle">Feature 7</text><text transform="translate(9.10 375.45) rotate(-90)" font-size="5.900" fill="#333" text-anchor="middle">Feature 7</text><path d="M14.30 375.45h-2.200M374.00 495.35v2.200" stroke="#444" stroke-width="0.600"/><text x="421.96" y="505.10" font-size="5.900" fill="#333" text-anchor="middle">Feature 8</text><text transform="translate(9.10 423.41) rotate(-90)" font-size="5.900" fill="#333" text-anchor="middle">Feature 8</text><path d="M14.30 423.41h-2.200M421.96 495.35v2.200" stroke="#444" stroke-width="0.600"/><text x="469.92" y="505.10" font-size="5.900" fill="#333" text-anchor="middle">Feature 9</text><text transform="translate(9.10 471.37) rotate(-90)" font-size="5.900" fill="#333" text-anchor="middle">Feature 9</text><path d="M14.30 471.37h-2.200M469.92 495.35v2.200" stroke="#444" stroke-width="0.600"/><text x="254.30" y="13.80" font-size="11.800" fill="#262626" text-anchor="middle">Correlation between different attributes</text><rect x="550.80" y="15.75" width="24.00" height="479.60" fill="url(#vir)"/><path d="M574.80 15.75h2.200" stroke="#444" stroke-width="0.600"/><text x="579.60" y="18.35" font-size="5.900" fill="#333">1.00</text><path d="M574.80 108.70h2.200" stroke="#444" stroke-width="0.600"/><text x="579.60" y="111.30" font-size="5.900" fill="#333">0.95</text><path d="M574.80 201.64h2.200" stroke="#444" stroke-width="0.600"/><text x="579.60" y="204.24" font-size="5.900" fill="#333">0.90</text><path d="M574.80 294.59h2.200" stroke="#444" stroke-width="0.600"/><text x="579.60" y="297.19" font-size="5.900" fill="#333">0.85</text><path d="M574.80 387.53h2.200" stroke="#444" stroke-width="0.600"/><text x="579.60" y="390.13" font-size="5.900" fill="#333">0.80</text><path d="M574.80 480.48h2.200" stroke="#444" stroke-width="0.600"/><text x="579.60" y="483.08" font-size="5.900" fill="#333">0.75</text></svg><svg style="left:951.6px;top:316.2px" width="652.4" height="468.5" viewBox="0 0 652.4 468.5" font-family="'DejaVu Sans', 'Liberation Sans', sans-serif"><rect width="652.4" height="468.5" fill="#fff"/><path d="M34.50 209.30L34.50 146.45L35.48 146.45L35.48 116.56L36.45 116.56L36.45 37.08L37.43 37.08L37.43 19.09L38.41 19.09L38.41 13.43L39.39 13.43L39.39 43.88L40.36 43.88L40.36 43.25L41.34 43.25L41.34 35.10L42.32 35.10L42.32 42.62L43.29 42.62L43.29 61.01L44.27 61.01L44.27 82.28L45.25 82.28L45.25 93.13L46.22 93.13L46.22 85.18L47.20 85.18L47.20 92.21L48.18 92.21L48.18 106.53L49.16 106.53L49.16 108.11L50.13 108.11L50.13 104.26L51.11 104.26L51.11 96.47L52.09 96.47L52.09 91.77L53.06 91.77L53.06 88.77L54.04 88.77L54.04 82.46L55.02 82.46L55.02 96.09L55.99 96.09L55.99 99.74L56.97 99.74L56.97 103.60L57.95 103.60L57.95 110.57L58.93 110.57L58.93 113.06L59.90 113.06L59.90 111.10L60.88 111.10L60.88 100.64L61.86 100.64L61.86 100.58L62.83 100.58L62.83 92.68L63.81 92.68L63.81 87.63L64.79 87.63L64.79 86.10L65.76 86.10L65.76 81.50L66.74 81.50L66.74 83.70L67.72 83.70L67.72 80.99L68.70 80.99L68.70 75.35L69.67 75.35L69.67 67.79L70.65 67.79L70.65 77.11L71.63 77.11L71.63 84.07L72.60 84.07L72.60 86.71L73.58 86.71L73.58 90.90L74.56 90.90L74.56 94.62L75.53 94.62L75.53 93.27L76.51 93.27L76.51 97.77L77.49 97.77L77.49 107.44L78.47 107.44L78.47 110.02L79.44 110.02L79.44 113.99L80.42 113.99L80.42 115.08L81.40 115.08L81.40 119.93L82.37 119.93L82.37 126.68L83.35 126.68L83.35 124.72L84.33 124.72L84.33 132.74L85.30 132.74L85.30 134.16L86.28 134.16L86.28 137.59L87.26 137.59L87.26 145.83L88.24 145.83L88.24 148.67L89.21 148.67L89.21 155.28L90.19 155.28L90.19 157.11L91.17 157.11L91.17 161.10L92.14 161.10L92.14 165.42L93.12 165.42L93.12 167.43L94.10 167.43L94.10 171.61L95.07 171.61L95.07 172.86L96.05 172.86L96.05 174.13L97.03 174.13L97.03 174.79L98.01 174.79L98.01 175.87L98.98 175.87L98.98 176.11L99.96 176.11L99.96 177.13L100.94 177.13L100.94 179.86L101.91 179.86L101.91 181.22L102.89 181.22L102.89 185.27L103.87 185.27L103.87 187.11L104.84 187.11L104.84 187.92L105.82 187.92L105.82 187.01L106.80 187.01L106.80 187.18L107.78 187.18L107.78 189.62L108.75 189.62L108.75 190.99L109.73 190.99L109.73 191.90L110.71 191.90L110.71 193.82L111.68 193.82L111.68 194.33L112.66 194.33L112.66 196.63L113.64 196.63L113.64 199.52L114.61 199.52L114.61 202.06L115.59 202.06L115.59 203.46L116.57 203.46L116.57 205.48L117.55 205.48L117.55 206.44L118.52 206.44L118.52 206.90L119.50 206.90L119.50 207.31L120.48 207.31L120.48 207.91L121.45 207.91L121.45 208.11L122.43 208.11L122.43 208.23L123.41 208.23L123.41 208.33L124.38 208.33L124.38 208.47L125.36 208.47L125.36 208.60L126.34 208.60L126.34 208.76L127.32 208.76L127.32 208.87L128.29 208.87L128.29 208.97L129.27 208.97L129.27 209.05L130.25 209.05L130.25 209.15L131.22 209.15L131.22 209.25L132.20 209.25L132.20 209.30Z" fill="#0000ff"/><rect x="29.60" y="3.10" width="107.50" height="206.20" fill="none" stroke="#555" stroke-width="0.650"/><path d="M29.60 209.30h-2" stroke="#444" stroke-width="0.500"/><text x="25.00" y="212.00" font-size="5.400" fill="#333" text-anchor="end">0</text><path d="M29.60 177.12h-2" stroke="#444" stroke-width="0.500"/><text x="25.00" y="179.82" font-size="5.400" fill="#333" text-anchor="end">200</text><path d="M29.60 144.93h-2" stroke="#444" stroke-width="0.500"/><text x="25.00" y="147.63" font-size="5.400" fill="#333" text-anchor="end">400</text><path d="M29.60 112.75h-2" stroke="#444" stroke-width="0.500"/><text x="25.00" y="115.45" font-size="5.400" fill="#333" text-anchor="end">600</text><path d="M29.60 80.57h-2" stroke="#444" stroke-width="0.500"/><text x="25.00" y="83.27" font-size="5.400" fill="#333" text-anchor="end">800</text><path d="M29.60 48.38h-2" stroke="#444" stroke-width="0.500"/><text x="25.00" y="51.08" font-size="5.400" fill="#333" text-anchor="end">1000</text><path d="M29.60 16.20h-2" stroke="#444" stroke-width="0.500"/><text x="25.00" y="18.90" font-size="5.400" fill="#333" text-anchor="end">1200</text><path d="M34.50 209.30v2" stroke="#444" stroke-width="0.500"/><text x="34.50" y="218.00" font-size="5.400" fill="#333" text-anchor="middle">0.0</text><path d="M54.04 209.30v2" stroke="#444" stroke-width="0.500"/><text x="54.04" y="218.00" font-size="5.400" fill="#333" text-anchor="middle">0.2</text><path d="M73.58 209.30v2" stroke="#444" stroke-width="0.500"/><text x="73.58" y="218.00" font-size="5.400" fill="#333" text-anchor="middle">0.4</text><path d="M93.12 209.30v2" stroke="#444" stroke-width="0.500"/><text x="93.12" y="218.00" font-size="5.400" fill="#333" text-anchor="middle">0.6</text><path d="M112.66 209.30v2" stroke="#444" stroke-width="0.500"/><text x="112.66" y="218.00" font-size="5.400" fill="#333" text-anchor="middle">0.8</text><path d="M132.20 209.30v2" stroke="#444" stroke-width="0.500"/><text x="132.20" y="218.00" font-size="5.400" fill="#333" text-anchor="middle">1.0</text><text transform="translate(7.90 107.70) rotate(-90)" font-size="5.200" fill="#333" text-anchor="middle">Frequency</text><rect x="87.60" y="5.60" width="47" height="10" rx="1" fill="#fff" stroke="#ddd" stroke-width="0.500"/><rect x="90.10" y="9.20" width="11" height="3" fill="#0000ff"/><text x="105.10" y="12.80" font-size="5.400" fill="#333">Feature 0</text><path d="M162.45 209.30L162.45 146.45L163.43 146.45L163.43 116.56L164.40 116.56L164.40 37.08L165.38 37.08L165.38 19.09L166.36 19.09L166.36 13.43L167.34 13.43L167.34 43.88L168.31 43.88L168.31 43.25L169.29 43.25L169.29 35.10L170.27 35.10L170.27 42.62L171.24 42.62L171.24 61.01L172.22 61.01L172.22 82.28L173.20 82.28L173.20 93.13L174.17 93.13L174.17 85.18L175.15 85.18L175.15 92.21L176.13 92.21L176.13 106.53L177.11 106.53L177.11 108.11L178.08 108.11L178.08 104.26L179.06 104.26L179.06 96.47L180.04 96.47L180.04 91.77L181.01 91.77L181.01 88.77L181.99 88.77L181.99 82.46L182.97 82.46L182.97 96.09L183.94 96.09L183.94 99.74L184.92 99.74L184.92 103.60L185.90 103.60L185.90 110.57L186.88 110.57L186.88 113.06L187.85 113.06L187.85 111.10L188.83 111.10L188.83 100.64L189.81 100.64L189.81 100.58L190.78 100.58L190.78 92.68L191.76 92.68L191.76 87.63L192.74 87.63L192.74 86.10L193.71 86.10L193.71 81.50L194.69 81.50L194.69 83.70L195.67 83.70L195.67 80.99L196.65 80.99L196.65 75.35L197.62 75.35L197.62 67.79L198.60 67.79L198.60 77.11L199.58 77.11L199.58 84.07L200.55 84.07L200.55 86.71L201.53 86.71L201.53 90.90L202.51 90.90L202.51 94.62L203.48 94.62L203.48 93.27L204.46 93.27L204.46 97.77L205.44 97.77L205.44 107.44L206.42 107.44L206.42 110.02L207.39 110.02L207.39 113.99L208.37 113.99L208.37 115.08L209.35 115.08L209.35 119.93L210.32 119.93L210.32 126.68L211.30 126.68L211.30 124.72L212.28 124.72L212.28 132.74L213.25 132.74L213.25 134.16L214.23 134.16L214.23 137.59L215.21 137.59L215.21 145.83L216.19 145.83L216.19 148.67L217.16 148.67L217.16 155.28L218.14 155.28L218.14 157.11L219.12 157.11L219.12 161.10L220.09 161.10L220.09 165.42L221.07 165.42L221.07 167.43L222.05 167.43L222.05 171.61L223.02 171.61L223.02 172.86L224.00 172.86L224.00 174.13L224.98 174.13L224.98 174.79L225.96 174.79L225.96 175.87L226.93 175.87L226.93 176.11L227.91 176.11L227.91 177.13L228.89 177.13L228.89 179.86L229.86 179.86L229.86 181.22L230.84 181.22L230.84 185.27L231.82 185.27L231.82 187.11L232.79 187.11L232.79 187.92L233.77 187.92L233.77 187.01L234.75 187.01L234.75 187.18L235.73 187.18L235.73 189.62L236.70 189.62L236.70 190.99L237.68 190.99L237.68 191.90L238.66 191.90L238.66 193.82L239.63 193.82L239.63 194.33L240.61 194.33L240.61 196.63L241.59 196.63L241.59 199.52L242.56 199.52L242.56 202.06L243.54 202.06L243.54 203.46L244.52 203.46L244.52 205.48L245.50 205.48L245.50 206.44L246.47 206.44L246.47 206.90L247.45 206.90L247.45 207.31L248.43 207.31L248.43 207.91L249.40 207.91L249.40 208.11L250.38 208.11L250.38 208.23L251.36 208.23L251.36 208.33L252.33 208.33L252.33 208.47L253.31 208.47L253.31 208.60L254.29 208.60L254.29 208.76L255.27 208.76L255.27 208.87L256.24 208.87L256.24 208.97L257.22 208.97L257.22 209.05L258.20 209.05L258.20 209.15L259.17 209.15L259.17 209.25L260.15 209.25L260.15 209.30Z" fill="#ff1900"/><rect x="157.55" y="3.10" width="107.50" height="206.20" fill="none" stroke="#555" stroke-width="0.650"/><path d="M157.55 209.30h-2" stroke="#444" stroke-width="0.500"/><text x="152.95" y="212.00" font-size="5.400" fill="#333" text-anchor="end">0</text><path d="M157.55 177.12h-2" stroke="#444" stroke-width="0.500"/><text x="152.95" y="179.82" font-size="5.400" fill="#333" text-anchor="end">200</text><path d="M157.55 144.93h-2" stroke="#444" stroke-width="0.500"/><text x="152.95" y="147.63" font-size="5.400" fill="#333" text-anchor="end">400</text><path d="M157.55 112.75h-2" stroke="#444" stroke-width="0.500"/><text x="152.95" y="115.45" font-size="5.400" fill="#333" text-anchor="end">600</text><path d="M157.55 80.57h-2" stroke="#444" stroke-width="0.500"/><text x="152.95" y="83.27" font-size="5.400" fill="#333" text-anchor="end">800</text><path d="M157.55 48.38h-2" stroke="#444" stroke-width="0.500"/><text x="152.95" y="51.08" font-size="5.400" fill="#333" text-anchor="end">1000</text><path d="M157.55 16.20h-2" stroke="#444" stroke-width="0.500"/><text x="152.95" y="18.90" font-size="5.400" fill="#333" text-anchor="end">1200</text><path d="M162.45 209.30v2" stroke="#444" stroke-width="0.500"/><text x="162.45" y="218.00" font-size="5.400" fill="#333" text-anchor="middle">0.0</text><path d="M181.99 209.30v2" stroke="#444" stroke-width="0.500"/><text x="181.99" y="218.00" font-size="5.400" fill="#333" text-anchor="middle">0.2</text><path d="M201.53 209.30v2" stroke="#444" stroke-width="0.500"/><text x="201.53" y="218.00" font-size="5.400" fill="#333" text-anchor="middle">0.4</text><path d="M221.07 209.30v2" stroke="#444" stroke-width="0.500"/><text x="221.07" y="218.00" font-size="5.400" fill="#333" text-anchor="middle">0.6</text><path d="M240.61 209.30v2" stroke="#444" stroke-width="0.500"/><text x="240.61" y="218.00" font-size="5.400" fill="#333" text-anchor="middle">0.8</text><path d="M260.15 209.30v2" stroke="#444" stroke-width="0.500"/><text x="260.15" y="218.00" font-size="5.400" fill="#333" text-anchor="middle">1.0</text><text transform="translate(135.85 107.70) rotate(-90)" font-size="5.200" fill="#333" text-anchor="middle">Frequency</text><rect x="215.55" y="5.60" width="47" height="10" rx="1" fill="#fff" stroke="#ddd" stroke-width="0.500"/><rect x="218.05" y="9.20" width="11" height="3" fill="#ff1900"/><text x="233.05" y="12.80" font-size="5.400" fill="#333">Feature 1</text><path d="M290.40 209.30L290.40 146.45L291.38 146.45L291.38 116.56L292.35 116.56L292.35 37.08L293.33 37.08L293.33 19.09L294.31 19.09L294.31 13.43L295.29 13.43L295.29 43.88L296.26 43.88L296.26 43.25L297.24 43.25L297.24 35.10L298.22 35.10L298.22 42.62L299.19 42.62L299.19 61.01L300.17 61.01L300.17 82.28L301.15 82.28L301.15 93.13L302.12 93.13L302.12 85.18L303.10 85.18L303.10 92.21L304.08 92.21L304.08 106.53L305.06 106.53L305.06 108.11L306.03 108.11L306.03 104.26L307.01 104.26L307.01 96.47L307.99 96.47L307.99 91.77L308.96 91.77L308.96 88.77L309.94 88.77L309.94 82.46L310.92 82.46L310.92 96.09L311.89 96.09L311.89 99.74L312.87 99.74L312.87 103.60L313.85 103.60L313.85 110.57L314.83 110.57L314.83 113.06L315.80 113.06L315.80 111.10L316.78 111.10L316.78 100.64L317.76 100.64L317.76 100.58L318.73 100.58L318.73 92.68L319.71 92.68L319.71 87.63L320.69 87.63L320.69 86.10L321.66 86.10L321.66 81.50L322.64 81.50L322.64 83.70L323.62 83.70L323.62 80.99L324.60 80.99L324.60 75.35L325.57 75.35L325.57 67.79L326.55 67.79L326.55 77.11L327.53 77.11L327.53 84.07L328.50 84.07L328.50 86.71L329.48 86.71L329.48 90.90L330.46 90.90L330.46 94.62L331.43 94.62L331.43 93.27L332.41 93.27L332.41 97.77L333.39 97.77L333.39 107.44L334.37 107.44L334.37 110.02L335.34 110.02L335.34 113.99L336.32 113.99L336.32 115.08L337.30 115.08L337.30 119.93L338.27 119.93L338.27 126.68L339.25 126.68L339.25 124.72L340.23 124.72L340.23 132.74L341.20 132.74L341.20 134.16L342.18 134.16L342.18 137.59L343.16 137.59L343.16 145.83L344.14 145.83L344.14 148.67L345.11 148.67L345.11 155.28L346.09 155.28L346.09 157.11L347.07 157.11L347.07 161.10L348.04 161.10L348.04 165.42L349.02 165.42L349.02 167.43L350.00 167.43L350.00 171.61L350.97 171.61L350.97 172.86L351.95 172.86L351.95 174.13L352.93 174.13L352.93 174.79L353.91 174.79L353.91 175.87L354.88 175.87L354.88 176.11L355.86 176.11L355.86 177.13L356.84 177.13L356.84 179.86L357.81 179.86L357.81 181.22L358.79 181.22L358.79 185.27L359.77 185.27L359.77 187.11L360.74 187.11L360.74 187.92L361.72 187.92L361.72 187.01L362.70 187.01L362.70 187.18L363.68 187.18L363.68 189.62L364.65 189.62L364.65 190.99L365.63 190.99L365.63 191.90L366.61 191.90L366.61 193.82L367.58 193.82L367.58 194.33L368.56 194.33L368.56 196.63L369.54 196.63L369.54 199.52L370.51 199.52L370.51 202.06L371.49 202.06L371.49 203.46L372.47 203.46L372.47 205.48L373.45 205.48L373.45 206.44L374.42 206.44L374.42 206.90L375.40 206.90L375.40 207.31L376.38 207.31L376.38 207.91L377.35 207.91L377.35 208.11L378.33 208.11L378.33 208.23L379.31 208.23L379.31 208.33L380.28 208.33L380.28 208.47L381.26 208.47L381.26 208.60L382.24 208.60L382.24 208.76L383.22 208.76L383.22 208.87L384.19 208.87L384.19 208.97L385.17 208.97L385.17 209.05L386.15 209.05L386.15 209.15L387.12 209.15L387.12 209.25L388.10 209.25L388.10 209.30Z" fill="#006a00"/><rect x="285.50" y="3.10" width="107.50" height="206.20" fill="none" stroke="#555" stroke-width="0.650"/><path d="M285.50 209.30h-2" stroke="#444" stroke-width="0.500"/><text x="280.90" y="212.00" font-size="5.400" fill="#333" text-anchor="end">0</text><path d="M285.50 177.12h-2" stroke="#444" stroke-width="0.500"/><text x="280.90" y="179.82" font-size="5.400" fill="#333" text-anchor="end">200</text><path d="M285.50 144.93h-2" stroke="#444" stroke-width="0.500"/><text x="280.90" y="147.63" font-size="5.400" fill="#333" text-anchor="end">400</text><path d="M285.50 112.75h-2" stroke="#444" stroke-width="0.500"/><text x="280.90" y="115.45" font-size="5.400" fill="#333" text-anchor="end">600</text><path d="M285.50 80.57h-2" stroke="#444" stroke-width="0.500"/><text x="280.90" y="83.27" font-size="5.400" fill="#333" text-anchor="end">800</text><path d="M285.50 48.38h-2" stroke="#444" stroke-width="0.500"/><text x="280.90" y="51.08" font-size="5.400" fill="#333" text-anchor="end">1000</text><path d="M285.50 16.20h-2" stroke="#444" stroke-width="0.500"/><text x="280.90" y="18.90" font-size="5.400" fill="#333" text-anchor="end">1200</text><path d="M290.40 209.30v2" stroke="#444" stroke-width="0.500"/><text x="290.40" y="218.00" font-size="5.400" fill="#333" text-anchor="middle">0.0</text><path d="M309.94 209.30v2" stroke="#444" stroke-width="0.500"/><text x="309.94" y="218.00" font-size="5.400" fill="#333" text-anchor="middle">0.2</text><path d="M329.48 209.30v2" stroke="#444" stroke-width="0.500"/><text x="329.48" y="218.00" font-size="5.400" fill="#333" text-anchor="middle">0.4</text><path d="M349.02 209.30v2" stroke="#444" stroke-width="0.500"/><text x="349.02" y="218.00" font-size="5.400" fill="#333" text-anchor="middle">0.6</text><path d="M368.56 209.30v2" stroke="#444" stroke-width="0.500"/><text x="368.56" y="218.00" font-size="5.400" fill="#333" text-anchor="middle">0.8</text><path d="M388.10 209.30v2" stroke="#444" stroke-width="0.500"/><text x="388.10" y="218.00" font-size="5.400" fill="#333" text-anchor="middle">1.0</text><text transform="translate(263.80 107.70) rotate(-90)" font-size="5.200" fill="#333" text-anchor="middle">Frequency</text><rect x="343.50" y="5.60" width="47" height="10" rx="1" fill="#fff" stroke="#ddd" stroke-width="0.500"/><rect x="346.00" y="9.20" width="11" height="3" fill="#006a00"/><text x="361.00" y="12.80" font-size="5.400" fill="#333">Feature 2</text><path d="M418.35 209.30L418.35 146.45L419.33 146.45L419.33 116.56L420.30 116.56L420.30 37.08L421.28 37.08L421.28 19.09L422.26 19.09L422.26 13.43L423.24 13.43L423.24 43.88L424.21 43.88L424.21 43.25L425.19 43.25L425.19 35.10L426.17 35.10L426.17 42.62L427.14 42.62L427.14 61.01L428.12 61.01L428.12 82.28L429.10 82.28L429.10 93.13L430.07 93.13L430.07 85.18L431.05 85.18L431.05 92.21L432.03 92.21L432.03 106.53L433.01 106.53L433.01 108.11L433.98 108.11L433.98 104.26L434.96 104.26L434.96 96.47L435.94 96.47L435.94 91.77L436.91 91.77L436.91 88.77L437.89 88.77L437.89 82.46L438.87 82.46L438.87 96.09L439.84 96.09L439.84 99.74L440.82 99.74L440.82 103.60L441.80 103.60L441.80 110.57L442.78 110.57L442.78 113.06L443.75 113.06L443.75 111.10L444.73 111.10L444.73 100.64L445.71 100.64L445.71 100.58L446.68 100.58L446.68 92.68L447.66 92.68L447.66 87.63L448.64 87.63L448.64 86.10L449.61 86.10L449.61 81.50L450.59 81.50L450.59 83.70L451.57 83.70L451.57 80.99L452.55 80.99L452.55 75.35L453.52 75.35L453.52 67.79L454.50 67.79L454.50 77.11L455.48 77.11L455.48 84.07L456.45 84.07L456.45 86.71L457.43 86.71L457.43 90.90L458.41 90.90L458.41 94.62L459.38 94.62L459.38 93.27L460.36 93.27L460.36 97.77L461.34 97.77L461.34 107.44L462.32 107.44L462.32 110.02L463.29 110.02L463.29 113.99L464.27 113.99L464.27 115.08L465.25 115.08L465.25 119.93L466.22 119.93L466.22 126.68L467.20 126.68L467.20 124.72L468.18 124.72L468.18 132.74L469.15 132.74L469.15 134.16L470.13 134.16L470.13 137.59L471.11 137.59L471.11 145.83L472.09 145.83L472.09 148.67L473.06 148.67L473.06 155.28L474.04 155.28L474.04 157.11L475.02 157.11L475.02 161.10L475.99 161.10L475.99 165.42L476.97 165.42L476.97 167.43L477.95 167.43L477.95 171.61L478.92 171.61L478.92 172.86L479.90 172.86L479.90 174.13L480.88 174.13L480.88 174.79L481.86 174.79L481.86 175.87L482.83 175.87L482.83 176.11L483.81 176.11L483.81 177.13L484.79 177.13L484.79 179.86L485.76 179.86L485.76 181.22L486.74 181.22L486.74 185.27L487.72 185.27L487.72 187.11L488.69 187.11L488.69 187.92L489.67 187.92L489.67 187.01L490.65 187.01L490.65 187.18L491.63 187.18L491.63 189.62L492.60 189.62L492.60 190.99L493.58 190.99L493.58 191.90L494.56 191.90L494.56 193.82L495.53 193.82L495.53 194.33L496.51 194.33L496.51 196.63L497.49 196.63L497.49 199.52L498.46 199.52L498.46 202.06L499.44 202.06L499.44 203.46L500.42 203.46L500.42 205.48L501.40 205.48L501.40 206.44L502.37 206.44L502.37 206.90L503.35 206.90L503.35 207.31L504.33 207.31L504.33 207.91L505.30 207.91L505.30 208.11L506.28 208.11L506.28 208.23L507.26 208.23L507.26 208.33L508.23 208.33L508.23 208.47L509.21 208.47L509.21 208.60L510.19 208.60L510.19 208.76L511.17 208.76L511.17 208.87L512.14 208.87L512.14 208.97L513.12 208.97L513.12 209.05L514.10 209.05L514.10 209.15L515.07 209.15L515.07 209.25L516.05 209.25L516.05 209.30Z" fill="#ffa500"/><rect x="413.45" y="3.10" width="107.50" height="206.20" fill="none" stroke="#555" stroke-width="0.650"/><path d="M413.45 209.30h-2" stroke="#444" stroke-width="0.500"/><text x="408.85" y="212.00" font-size="5.400" fill="#333" text-anchor="end">0</text><path d="M413.45 177.12h-2" stroke="#444" stroke-width="0.500"/><text x="408.85" y="179.82" font-size="5.400" fill="#333" text-anchor="end">200</text><path d="M413.45 144.93h-2" stroke="#444" stroke-width="0.500"/><text x="408.85" y="147.63" font-size="5.400" fill="#333" text-anchor="end">400</text><path d="M413.45 112.75h-2" stroke="#444" stroke-width="0.500"/><text x="408.85" y="115.45" font-size="5.400" fill="#333" text-anchor="end">600</text><path d="M413.45 80.57h-2" stroke="#444" stroke-width="0.500"/><text x="408.85" y="83.27" font-size="5.400" fill="#333" text-anchor="end">800</text><path d="M413.45 48.38h-2" stroke="#444" stroke-width="0.500"/><text x="408.85" y="51.08" font-size="5.400" fill="#333" text-anchor="end">1000</text><path d="M413.45 16.20h-2" stroke="#444" stroke-width="0.500"/><text x="408.85" y="18.90" font-size="5.400" fill="#333" text-anchor="end">1200</text><path d="M418.35 209.30v2" stroke="#444" stroke-width="0.500"/><text x="418.35" y="218.00" font-size="5.400" fill="#333" text-anchor="middle">0.0</text><path d="M437.89 209.30v2" stroke="#444" stroke-width="0.500"/><text x="437.89" y="218.00" font-size="5.400" fill="#333" text-anchor="middle">0.2</text><path d="M457.43 209.30v2" stroke="#444" stroke-width="0.500"/><text x="457.43" y="218.00" font-size="5.400" fill="#333" text-anchor="middle">0.4</text><path d="M476.97 209.30v2" stroke="#444" stroke-width="0.500"/><text x="476.97" y="218.00" font-size="5.400" fill="#333" text-anchor="middle">0.6</text><path d="M496.51 209.30v2" stroke="#444" stroke-width="0.500"/><text x="496.51" y="218.00" font-size="5.400" fill="#333" text-anchor="middle">0.8</text><path d="M516.05 209.30v2" stroke="#444" stroke-width="0.500"/><text x="516.05" y="218.00" font-size="5.400" fill="#333" text-anchor="middle">1.0</text><text transform="translate(391.75 107.70) rotate(-90)" font-size="5.200" fill="#333" text-anchor="middle">Frequency</text><rect x="471.45" y="5.60" width="47" height="10" rx="1" fill="#fff" stroke="#ddd" stroke-width="0.500"/><rect x="473.95" y="9.20" width="11" height="3" fill="#ffa500"/><text x="488.95" y="12.80" font-size="5.400" fill="#333">Feature 3</text><path d="M546.30 209.30L546.30 146.45L547.28 146.45L547.28 116.56L548.25 116.56L548.25 37.08L549.23 37.08L549.23 19.09L550.21 19.09L550.21 13.43L551.18 13.43L551.18 43.88L552.16 43.88L552.16 43.25L553.14 43.25L553.14 35.10L554.12 35.10L554.12 42.62L555.09 42.62L555.09 61.01L556.07 61.01L556.07 82.28L557.05 82.28L557.05 93.13L558.02 93.13L558.02 85.18L559.00 85.18L559.00 92.21L559.98 92.21L559.98 106.53L560.95 106.53L560.95 108.11L561.93 108.11L561.93 104.26L562.91 104.26L562.91 96.47L563.89 96.47L563.89 91.77L564.86 91.77L564.86 88.77L565.84 88.77L565.84 82.46L566.82 82.46L566.82 96.09L567.79 96.09L567.79 99.74L568.77 99.74L568.77 103.60L569.75 103.60L569.75 110.57L570.72 110.57L570.72 113.06L571.70 113.06L571.70 111.10L572.68 111.10L572.68 100.64L573.66 100.64L573.66 100.58L574.63 100.58L574.63 92.68L575.61 92.68L575.61 87.63L576.59 87.63L576.59 86.10L577.56 86.10L577.56 81.50L578.54 81.50L578.54 83.70L579.52 83.70L579.52 80.99L580.50 80.99L580.50 75.35L581.47 75.35L581.47 67.79L582.45 67.79L582.45 77.11L583.43 77.11L583.43 84.07L584.40 84.07L584.40 86.71L585.38 86.71L585.38 90.90L586.36 90.90L586.36 94.62L587.33 94.62L587.33 93.27L588.31 93.27L588.31 97.77L589.29 97.77L589.29 107.44L590.26 107.44L590.26 110.02L591.24 110.02L591.24 113.99L592.22 113.99L592.22 115.08L593.20 115.08L593.20 119.93L594.17 119.93L594.17 126.68L595.15 126.68L595.15 124.72L596.13 124.72L596.13 132.74L597.10 132.74L597.10 134.16L598.08 134.16L598.08 137.59L599.06 137.59L599.06 145.83L600.03 145.83L600.03 148.67L601.01 148.67L601.01 155.28L601.99 155.28L601.99 157.11L602.97 157.11L602.97 161.10L603.94 161.10L603.94 165.42L604.92 165.42L604.92 167.43L605.90 167.43L605.90 171.61L606.87 171.61L606.87 172.86L607.85 172.86L607.85 174.13L608.83 174.13L608.83 174.79L609.80 174.79L609.80 175.87L610.78 175.87L610.78 176.11L611.76 176.11L611.76 177.13L612.74 177.13L612.74 179.86L613.71 179.86L613.71 181.22L614.69 181.22L614.69 185.27L615.67 185.27L615.67 187.11L616.64 187.11L616.64 187.92L617.62 187.92L617.62 187.01L618.60 187.01L618.60 187.18L619.57 187.18L619.57 189.62L620.55 189.62L620.55 190.99L621.53 190.99L621.53 191.90L622.51 191.90L622.51 193.82L623.48 193.82L623.48 194.33L624.46 194.33L624.46 196.63L625.44 196.63L625.44 199.52L626.41 199.52L626.41 202.06L627.39 202.06L627.39 203.46L628.37 203.46L628.37 205.48L629.34 205.48L629.34 206.44L630.32 206.44L630.32 206.90L631.30 206.90L631.30 207.31L632.28 207.31L632.28 207.91L633.25 207.91L633.25 208.11L634.23 208.11L634.23 208.23L635.21 208.23L635.21 208.33L636.18 208.33L636.18 208.47L637.16 208.47L637.16 208.60L638.14 208.60L638.14 208.76L639.12 208.76L639.12 208.87L640.09 208.87L640.09 208.97L641.07 208.97L641.07 209.05L642.05 209.05L642.05 209.15L643.02 209.15L643.02 209.25L644.00 209.25L644.00 209.30Z" fill="#0000ff"/><rect x="541.40" y="3.10" width="107.50" height="206.20" fill="none" stroke="#555" stroke-width="0.650"/><path d="M541.40 209.30h-2" stroke="#444" stroke-width="0.500"/><text x="536.80" y="212.00" font-size="5.400" fill="#333" text-anchor="end">0</text><path d="M541.40 177.12h-2" stroke="#444" stroke-width="0.500"/><text x="536.80" y="179.82" font-size="5.400" fill="#333" text-anchor="end">200</text><path d="M541.40 144.93h-2" stroke="#444" stroke-width="0.500"/><text x="536.80" y="147.63" font-size="5.400" fill="#333" text-anchor="end">400</text><path d="M541.40 112.75h-2" stroke="#444" stroke-width="0.500"/><text x="536.80" y="115.45" font-size="5.400" fill="#333" text-anchor="end">600</text><path d="M541.40 80.57h-2" stroke="#444" stroke-width="0.500"/><text x="536.80" y="83.27" font-size="5.400" fill="#333" text-anchor="end">800</text><path d="M541.40 48.38h-2" stroke="#444" stroke-width="0.500"/><text x="536.80" y="51.08" font-size="5.400" fill="#333" text-anchor="end">1000</text><path d="M541.40 16.20h-2" stroke="#444" stroke-width="0.500"/><text x="536.80" y="18.90" font-size="5.400" fill="#333" text-anchor="end">1200</text><path d="M546.30 209.30v2" stroke="#444" stroke-width="0.500"/><text x="546.30" y="218.00" font-size="5.400" fill="#333" text-anchor="middle">0.0</text><path d="M565.84 209.30v2" stroke="#444" stroke-width="0.500"/><text x="565.84" y="218.00" font-size="5.400" fill="#333" text-anchor="middle">0.2</text><path d="M585.38 209.30v2" stroke="#444" stroke-width="0.500"/><text x="585.38" y="218.00" font-size="5.400" fill="#333" text-anchor="middle">0.4</text><path d="M604.92 209.30v2" stroke="#444" stroke-width="0.500"/><text x="604.92" y="218.00" font-size="5.400" fill="#333" text-anchor="middle">0.6</text><path d="M624.46 209.30v2" stroke="#444" stroke-width="0.500"/><text x="624.46" y="218.00" font-size="5.400" fill="#333" text-anchor="middle">0.8</text><path d="M644.00 209.30v2" stroke="#444" stroke-width="0.500"/><text x="644.00" y="218.00" font-size="5.400" fill="#333" text-anchor="middle">1.0</text><text transform="translate(519.70 107.70) rotate(-90)" font-size="5.200" fill="#333" text-anchor="middle">Frequency</text><rect x="599.40" y="5.60" width="47" height="10" rx="1" fill="#fff" stroke="#ddd" stroke-width="0.500"/><rect x="601.90" y="9.20" width="11" height="3" fill="#0000ff"/><text x="616.90" y="12.80" font-size="5.400" fill="#333">Feature 4</text><path d="M34.50 455.30L34.50 392.45L35.48 392.45L35.48 362.56L36.45 362.56L36.45 283.08L37.43 283.08L37.43 265.09L38.41 265.09L38.41 259.43L39.39 259.43L39.39 289.88L40.36 289.88L40.36 289.25L41.34 289.25L41.34 281.10L42.32 281.10L42.32 288.62L43.29 288.62L43.29 307.01L44.27 307.01L44.27 328.28L45.25 328.28L45.25 339.13L46.22 339.13L46.22 331.18L47.20 331.18L47.20 338.21L48.18 338.21L48.18 352.53L49.16 352.53L49.16 354.11L50.13 354.11L50.13 350.26L51.11 350.26L51.11 342.47L52.09 342.47L52.09 337.77L53.06 337.77L53.06 334.77L54.04 334.77L54.04 328.46L55.02 328.46L55.02 342.09L55.99 342.09L55.99 345.74L56.97 345.74L56.97 349.60L57.95 349.60L57.95 356.57L58.93 356.57L58.93 359.06L59.90 359.06L59.90 357.10L60.88 357.10L60.88 346.64L61.86 346.64L61.86 346.58L62.83 346.58L62.83 338.68L63.81 338.68L63.81 333.63L64.79 333.63L64.79 332.10L65.76 332.10L65.76 327.50L66.74 327.50L66.74 329.70L67.72 329.70L67.72 326.99L68.70 326.99L68.70 321.35L69.67 321.35L69.67 313.79L70.65 313.79L70.65 323.11L71.63 323.11L71.63 330.07L72.60 330.07L72.60 332.71L73.58 332.71L73.58 336.90L74.56 336.90L74.56 340.62L75.53 340.62L75.53 339.27L76.51 339.27L76.51 343.77L77.49 343.77L77.49 353.44L78.47 353.44L78.47 356.02L79.44 356.02L79.44 359.99L80.42 359.99L80.42 361.08L81.40 361.08L81.40 365.93L82.37 365.93L82.37 372.68L83.35 372.68L83.35 370.72L84.33 370.72L84.33 378.74L85.30 378.74L85.30 380.16L86.28 380.16L86.28 383.59L87.26 383.59L87.26 391.83L88.24 391.83L88.24 394.67L89.21 394.67L89.21 401.28L90.19 401.28L90.19 403.11L91.17 403.11L91.17 407.10L92.14 407.10L92.14 411.42L93.12 411.42L93.12 413.43L94.10 413.43L94.10 417.61L95.07 417.61L95.07 418.86L96.05 418.86L96.05 420.13L97.03 420.13L97.03 420.79L98.01 420.79L98.01 421.87L98.98 421.87L98.98 422.11L99.96 422.11L99.96 423.13L100.94 423.13L100.94 425.86L101.91 425.86L101.91 427.22L102.89 427.22L102.89 431.27L103.87 431.27L103.87 433.11L104.84 433.11L104.84 433.92L105.82 433.92L105.82 433.01L106.80 433.01L106.80 433.18L107.78 433.18L107.78 435.62L108.75 435.62L108.75 436.99L109.73 436.99L109.73 437.90L110.71 437.90L110.71 439.82L111.68 439.82L111.68 440.33L112.66 440.33L112.66 442.63L113.64 442.63L113.64 445.52L114.61 445.52L114.61 448.06L115.59 448.06L115.59 449.46L116.57 449.46L116.57 451.48L117.55 451.48L117.55 452.44L118.52 452.44L118.52 452.90L119.50 452.90L119.50 453.31L120.48 453.31L120.48 453.91L121.45 453.91L121.45 454.11L122.43 454.11L122.43 454.23L123.41 454.23L123.41 454.33L124.38 454.33L124.38 454.47L125.36 454.47L125.36 454.60L126.34 454.60L126.34 454.76L127.32 454.76L127.32 454.87L128.29 454.87L128.29 454.97L129.27 454.97L129.27 455.05L130.25 455.05L130.25 455.15L131.22 455.15L131.22 455.25L132.20 455.25L132.20 455.30Z" fill="#ff1900"/><rect x="29.60" y="249.30" width="107.50" height="206.00" fill="none" stroke="#555" stroke-width="0.650"/><path d="M29.60 455.30h-2" stroke="#444" stroke-width="0.500"/><text x="25.00" y="458.00" font-size="5.400" fill="#333" text-anchor="end">0</text><path d="M29.60 423.12h-2" stroke="#444" stroke-width="0.500"/><text x="25.00" y="425.82" font-size="5.400" fill="#333" text-anchor="end">200</text><path d="M29.60 390.93h-2" stroke="#444" stroke-width="0.500"/><text x="25.00" y="393.63" font-size="5.400" fill="#333" text-anchor="end">400</text><path d="M29.60 358.75h-2" stroke="#444" stroke-width="0.500"/><text x="25.00" y="361.45" font-size="5.400" fill="#333" text-anchor="end">600</text><path d="M29.60 326.57h-2" stroke="#444" stroke-width="0.500"/><text x="25.00" y="329.27" font-size="5.400" fill="#333" text-anchor="end">800</text><path d="M29.60 294.38h-2" stroke="#444" stroke-width="0.500"/><text x="25.00" y="297.08" font-size="5.400" fill="#333" text-anchor="end">1000</text><path d="M29.60 262.20h-2" stroke="#444" stroke-width="0.500"/><text x="25.00" y="264.90" font-size="5.400" fill="#333" text-anchor="end">1200</text><path d="M34.50 455.30v2" stroke="#444" stroke-width="0.500"/><text x="34.50" y="464.00" font-size="5.400" fill="#333" text-anchor="middle">0.0</text><path d="M54.04 455.30v2" stroke="#444" stroke-width="0.500"/><text x="54.04" y="464.00" font-size="5.400" fill="#333" text-anchor="middle">0.2</text><path d="M73.58 455.30v2" stroke="#444" stroke-width="0.500"/><text x="73.58" y="464.00" font-size="5.400" fill="#333" text-anchor="middle">0.4</text><path d="M93.12 455.30v2" stroke="#444" stroke-width="0.500"/><text x="93.12" y="464.00" font-size="5.400" fill="#333" text-anchor="middle">0.6</text><path d="M112.66 455.30v2" stroke="#444" stroke-width="0.500"/><text x="112.66" y="464.00" font-size="5.400" fill="#333" text-anchor="middle">0.8</text><path d="M132.20 455.30v2" stroke="#444" stroke-width="0.500"/><text x="132.20" y="464.00" font-size="5.400" fill="#333" text-anchor="middle">1.0</text><text transform="translate(7.90 353.80) rotate(-90)" font-size="5.200" fill="#333" text-anchor="middle">Frequency</text><rect x="87.60" y="251.80" width="47" height="10" rx="1" fill="#fff" stroke="#ddd" stroke-width="0.500"/><rect x="90.10" y="255.40" width="11" height="3" fill="#ff1900"/><text x="105.10" y="259.00" font-size="5.400" fill="#333">Feature 5</text><path d="M162.45 455.30L162.45 392.45L163.43 392.45L163.43 362.56L164.40 362.56L164.40 283.08L165.38 283.08L165.38 265.09L166.36 265.09L166.36 259.43L167.34 259.43L167.34 289.88L168.31 289.88L168.31 289.25L169.29 289.25L169.29 281.10L170.27 281.10L170.27 288.62L171.24 288.62L171.24 307.01L172.22 307.01L172.22 328.28L173.20 328.28L173.20 339.13L174.17 339.13L174.17 331.18L175.15 331.18L175.15 338.21L176.13 338.21L176.13 352.53L177.11 352.53L177.11 354.11L178.08 354.11L178.08 350.26L179.06 350.26L179.06 342.47L180.04 342.47L180.04 337.77L181.01 337.77L181.01 334.77L181.99 334.77L181.99 328.46L182.97 328.46L182.97 342.09L183.94 342.09L183.94 345.74L184.92 345.74L184.92 349.60L185.90 349.60L185.90 356.57L186.88 356.57L186.88 359.06L187.85 359.06L187.85 357.10L188.83 357.10L188.83 346.64L189.81 346.64L189.81 346.58L190.78 346.58L190.78 338.68L191.76 338.68L191.76 333.63L192.74 333.63L192.74 332.10L193.71 332.10L193.71 327.50L194.69 327.50L194.69 329.70L195.67 329.70L195.67 326.99L196.65 326.99L196.65 321.35L197.62 321.35L197.62 313.79L198.60 313.79L198.60 323.11L199.58 323.11L199.58 330.07L200.55 330.07L200.55 332.71L201.53 332.71L201.53 336.90L202.51 336.90L202.51 340.62L203.48 340.62L203.48 339.27L204.46 339.27L204.46 343.77L205.44 343.77L205.44 353.44L206.42 353.44L206.42 356.02L207.39 356.02L207.39 359.99L208.37 359.99L208.37 361.08L209.35 361.08L209.35 365.93L210.32 365.93L210.32 372.68L211.30 372.68L211.30 370.72L212.28 370.72L212.28 378.74L213.25 378.74L213.25 380.16L214.23 380.16L214.23 383.59L215.21 383.59L215.21 391.83L216.19 391.83L216.19 394.67L217.16 394.67L217.16 401.28L218.14 401.28L218.14 403.11L219.12 403.11L219.12 407.10L220.09 407.10L220.09 411.42L221.07 411.42L221.07 413.43L222.05 413.43L222.05 417.61L223.02 417.61L223.02 418.86L224.00 418.86L224.00 420.13L224.98 420.13L224.98 420.79L225.96 420.79L225.96 421.87L226.93 421.87L226.93 422.11L227.91 422.11L227.91 423.13L228.89 423.13L228.89 425.86L229.86 425.86L229.86 427.22L230.84 427.22L230.84 431.27L231.82 431.27L231.82 433.11L232.79 433.11L232.79 433.92L233.77 433.92L233.77 433.01L234.75 433.01L234.75 433.18L235.73 433.18L235.73 435.62L236.70 435.62L236.70 436.99L237.68 436.99L237.68 437.90L238.66 437.90L238.66 439.82L239.63 439.82L239.63 440.33L240.61 440.33L240.61 442.63L241.59 442.63L241.59 445.52L242.56 445.52L242.56 448.06L243.54 448.06L243.54 449.46L244.52 449.46L244.52 451.48L245.50 451.48L245.50 452.44L246.47 452.44L246.47 452.90L247.45 452.90L247.45 453.31L248.43 453.31L248.43 453.91L249.40 453.91L249.40 454.11L250.38 454.11L250.38 454.23L251.36 454.23L251.36 454.33L252.33 454.33L252.33 454.47L253.31 454.47L253.31 454.60L254.29 454.60L254.29 454.76L255.27 454.76L255.27 454.87L256.24 454.87L256.24 454.97L257.22 454.97L257.22 455.05L258.20 455.05L258.20 455.15L259.17 455.15L259.17 455.25L260.15 455.25L260.15 455.30Z" fill="#006a00"/><rect x="157.55" y="249.30" width="107.50" height="206.00" fill="none" stroke="#555" stroke-width="0.650"/><path d="M157.55 455.30h-2" stroke="#444" stroke-width="0.500"/><text x="152.95" y="458.00" font-size="5.400" fill="#333" text-anchor="end">0</text><path d="M157.55 423.12h-2" stroke="#444" stroke-width="0.500"/><text x="152.95" y="425.82" font-size="5.400" fill="#333" text-anchor="end">200</text><path d="M157.55 390.93h-2" stroke="#444" stroke-width="0.500"/><text x="152.95" y="393.63" font-size="5.400" fill="#333" text-anchor="end">400</text><path d="M157.55 358.75h-2" stroke="#444" stroke-width="0.500"/><text x="152.95" y="361.45" font-size="5.400" fill="#333" text-anchor="end">600</text><path d="M157.55 326.57h-2" stroke="#444" stroke-width="0.500"/><text x="152.95" y="329.27" font-size="5.400" fill="#333" text-anchor="end">800</text><path d="M157.55 294.38h-2" stroke="#444" stroke-width="0.500"/><text x="152.95" y="297.08" font-size="5.400" fill="#333" text-anchor="end">1000</text><path d="M157.55 262.20h-2" stroke="#444" stroke-width="0.500"/><text x="152.95" y="264.90" font-size="5.400" fill="#333" text-anchor="end">1200</text><path d="M162.45 455.30v2" stroke="#444" stroke-width="0.500"/><text x="162.45" y="464.00" font-size="5.400" fill="#333" text-anchor="middle">0.0</text><path d="M181.99 455.30v2" stroke="#444" stroke-width="0.500"/><text x="181.99" y="464.00" font-size="5.400" fill="#333" text-anchor="middle">0.2</text><path d="M201.53 455.30v2" stroke="#444" stroke-width="0.500"/><text x="201.53" y="464.00" font-size="5.400" fill="#333" text-anchor="middle">0.4</text><path d="M221.07 455.30v2" stroke="#444" stroke-width="0.500"/><text x="221.07" y="464.00" font-size="5.400" fill="#333" text-anchor="middle">0.6</text><path d="M240.61 455.30v2" stroke="#444" stroke-width="0.500"/><text x="240.61" y="464.00" font-size="5.400" fill="#333" text-anchor="middle">0.8</text><path d="M260.15 455.30v2" stroke="#444" stroke-width="0.500"/><text x="260.15" y="464.00" font-size="5.400" fill="#333" text-anchor="middle">1.0</text><text transform="translate(135.85 353.80) rotate(-90)" font-size="5.200" fill="#333" text-anchor="middle">Frequency</text><rect x="215.55" y="251.80" width="47" height="10" rx="1" fill="#fff" stroke="#ddd" stroke-width="0.500"/><rect x="218.05" y="255.40" width="11" height="3" fill="#006a00"/><text x="233.05" y="259.00" font-size="5.400" fill="#333">Feature 6</text><path d="M290.40 455.30L290.40 392.45L291.38 392.45L291.38 362.56L292.35 362.56L292.35 283.08L293.33 283.08L293.33 265.09L294.31 265.09L294.31 259.43L295.29 259.43L295.29 289.88L296.26 289.88L296.26 289.25L297.24 289.25L297.24 281.10L298.22 281.10L298.22 288.62L299.19 288.62L299.19 307.01L300.17 307.01L300.17 328.28L301.15 328.28L301.15 339.13L302.12 339.13L302.12 331.18L303.10 331.18L303.10 338.21L304.08 338.21L304.08 352.53L305.06 352.53L305.06 354.11L306.03 354.11L306.03 350.26L307.01 350.26L307.01 342.47L307.99 342.47L307.99 337.77L308.96 337.77L308.96 334.77L309.94 334.77L309.94 328.46L310.92 328.46L310.92 342.09L311.89 342.09L311.89 345.74L312.87 345.74L312.87 349.60L313.85 349.60L313.85 356.57L314.83 356.57L314.83 359.06L315.80 359.06L315.80 357.10L316.78 357.10L316.78 346.64L317.76 346.64L317.76 346.58L318.73 346.58L318.73 338.68L319.71 338.68L319.71 333.63L320.69 333.63L320.69 332.10L321.66 332.10L321.66 327.50L322.64 327.50L322.64 329.70L323.62 329.70L323.62 326.99L324.60 326.99L324.60 321.35L325.57 321.35L325.57 313.79L326.55 313.79L326.55 323.11L327.53 323.11L327.53 330.07L328.50 330.07L328.50 332.71L329.48 332.71L329.48 336.90L330.46 336.90L330.46 340.62L331.43 340.62L331.43 339.27L332.41 339.27L332.41 343.77L333.39 343.77L333.39 353.44L334.37 353.44L334.37 356.02L335.34 356.02L335.34 359.99L336.32 359.99L336.32 361.08L337.30 361.08L337.30 365.93L338.27 365.93L338.27 372.68L339.25 372.68L339.25 370.72L340.23 370.72L340.23 378.74L341.20 378.74L341.20 380.16L342.18 380.16L342.18 383.59L343.16 383.59L343.16 391.83L344.14 391.83L344.14 394.67L345.11 394.67L345.11 401.28L346.09 401.28L346.09 403.11L347.07 403.11L347.07 407.10L348.04 407.10L348.04 411.42L349.02 411.42L349.02 413.43L350.00 413.43L350.00 417.61L350.97 417.61L350.97 418.86L351.95 418.86L351.95 420.13L352.93 420.13L352.93 420.79L353.91 420.79L353.91 421.87L354.88 421.87L354.88 422.11L355.86 422.11L355.86 423.13L356.84 423.13L356.84 425.86L357.81 425.86L357.81 427.22L358.79 427.22L358.79 431.27L359.77 431.27L359.77 433.11L360.74 433.11L360.74 433.92L361.72 433.92L361.72 433.01L362.70 433.01L362.70 433.18L363.68 433.18L363.68 435.62L364.65 435.62L364.65 436.99L365.63 436.99L365.63 437.90L366.61 437.90L366.61 439.82L367.58 439.82L367.58 440.33L368.56 440.33L368.56 442.63L369.54 442.63L369.54 445.52L370.51 445.52L370.51 448.06L371.49 448.06L371.49 449.46L372.47 449.46L372.47 451.48L373.45 451.48L373.45 452.44L374.42 452.44L374.42 452.90L375.40 452.90L375.40 453.31L376.38 453.31L376.38 453.91L377.35 453.91L377.35 454.11L378.33 454.11L378.33 454.23L379.31 454.23L379.31 454.33L380.28 454.33L380.28 454.47L381.26 454.47L381.26 454.60L382.24 454.60L382.24 454.76L383.22 454.76L383.22 454.87L384.19 454.87L384.19 454.97L385.17 454.97L385.17 455.05L386.15 455.05L386.15 455.15L387.12 455.15L387.12 455.25L388.10 455.25L388.10 455.30Z" fill="#ffa500"/><rect x="285.50" y="249.30" width="107.50" height="206.00" fill="none" stroke="#555" stroke-width="0.650"/><path d="M285.50 455.30h-2" stroke="#444" stroke-width="0.500"/><text x="280.90" y="458.00" font-size="5.400" fill="#333" text-anchor="end">0</text><path d="M285.50 423.12h-2" stroke="#444" stroke-width="0.500"/><text x="280.90" y="425.82" font-size="5.400" fill="#333" text-anchor="end">200</text><path d="M285.50 390.93h-2" stroke="#444" stroke-width="0.500"/><text x="280.90" y="393.63" font-size="5.400" fill="#333" text-anchor="end">400</text><path d="M285.50 358.75h-2" stroke="#444" stroke-width="0.500"/><text x="280.90" y="361.45" font-size="5.400" fill="#333" text-anchor="end">600</text><path d="M285.50 326.57h-2" stroke="#444" stroke-width="0.500"/><text x="280.90" y="329.27" font-size="5.400" fill="#333" text-anchor="end">800</text><path d="M285.50 294.38h-2" stroke="#444" stroke-width="0.500"/><text x="280.90" y="297.08" font-size="5.400" fill="#333" text-anchor="end">1000</text><path d="M285.50 262.20h-2" stroke="#444" stroke-width="0.500"/><text x="280.90" y="264.90" font-size="5.400" fill="#333" text-anchor="end">1200</text><path d="M290.40 455.30v2" stroke="#444" stroke-width="0.500"/><text x="290.40" y="464.00" font-size="5.400" fill="#333" text-anchor="middle">0.0</text><path d="M309.94 455.30v2" stroke="#444" stroke-width="0.500"/><text x="309.94" y="464.00" font-size="5.400" fill="#333" text-anchor="middle">0.2</text><path d="M329.48 455.30v2" stroke="#444" stroke-width="0.500"/><text x="329.48" y="464.00" font-size="5.400" fill="#333" text-anchor="middle">0.4</text><path d="M349.02 455.30v2" stroke="#444" stroke-width="0.500"/><text x="349.02" y="464.00" font-size="5.400" fill="#333" text-anchor="middle">0.6</text><path d="M368.56 455.30v2" stroke="#444" stroke-width="0.500"/><text x="368.56" y="464.00" font-size="5.400" fill="#333" text-anchor="middle">0.8</text><path d="M388.10 455.30v2" stroke="#444" stroke-width="0.500"/><text x="388.10" y="464.00" font-size="5.400" fill="#333" text-anchor="middle">1.0</text><text transform="translate(263.80 353.80) rotate(-90)" font-size="5.200" fill="#333" text-anchor="middle">Frequency</text><rect x="343.50" y="251.80" width="47" height="10" rx="1" fill="#fff" stroke="#ddd" stroke-width="0.500"/><rect x="346.00" y="255.40" width="11" height="3" fill="#ffa500"/><text x="361.00" y="259.00" font-size="5.400" fill="#333">Feature 7</text><path d="M418.35 455.30L418.35 392.45L419.33 392.45L419.33 362.56L420.30 362.56L420.30 283.08L421.28 283.08L421.28 265.09L422.26 265.09L422.26 259.43L423.24 259.43L423.24 289.88L424.21 289.88L424.21 289.25L425.19 289.25L425.19 281.10L426.17 281.10L426.17 288.62L427.14 288.62L427.14 307.01L428.12 307.01L428.12 328.28L429.10 328.28L429.10 339.13L430.07 339.13L430.07 331.18L431.05 331.18L431.05 338.21L432.03 338.21L432.03 352.53L433.01 352.53L433.01 354.11L433.98 354.11L433.98 350.26L434.96 350.26L434.96 342.47L435.94 342.47L435.94 337.77L436.91 337.77L436.91 334.77L437.89 334.77L437.89 328.46L438.87 328.46L438.87 342.09L439.84 342.09L439.84 345.74L440.82 345.74L440.82 349.60L441.80 349.60L441.80 356.57L442.78 356.57L442.78 359.06L443.75 359.06L443.75 357.10L444.73 357.10L444.73 346.64L445.71 346.64L445.71 346.58L446.68 346.58L446.68 338.68L447.66 338.68L447.66 333.63L448.64 333.63L448.64 332.10L449.61 332.10L449.61 327.50L450.59 327.50L450.59 329.70L451.57 329.70L451.57 326.99L452.55 326.99L452.55 321.35L453.52 321.35L453.52 313.79L454.50 313.79L454.50 323.11L455.48 323.11L455.48 330.07L456.45 330.07L456.45 332.71L457.43 332.71L457.43 336.90L458.41 336.90L458.41 340.62L459.38 340.62L459.38 339.27L460.36 339.27L460.36 343.77L461.34 343.77L461.34 353.44L462.32 353.44L462.32 356.02L463.29 356.02L463.29 359.99L464.27 359.99L464.27 361.08L465.25 361.08L465.25 365.93L466.22 365.93L466.22 372.68L467.20 372.68L467.20 370.72L468.18 370.72L468.18 378.74L469.15 378.74L469.15 380.16L470.13 380.16L470.13 383.59L471.11 383.59L471.11 391.83L472.09 391.83L472.09 394.67L473.06 394.67L473.06 401.28L474.04 401.28L474.04 403.11L475.02 403.11L475.02 407.10L475.99 407.10L475.99 411.42L476.97 411.42L476.97 413.43L477.95 413.43L477.95 417.61L478.92 417.61L478.92 418.86L479.90 418.86L479.90 420.13L480.88 420.13L480.88 420.79L481.86 420.79L481.86 421.87L482.83 421.87L482.83 422.11L483.81 422.11L483.81 423.13L484.79 423.13L484.79 425.86L485.76 425.86L485.76 427.22L486.74 427.22L486.74 431.27L487.72 431.27L487.72 433.11L488.69 433.11L488.69 433.92L489.67 433.92L489.67 433.01L490.65 433.01L490.65 433.18L491.63 433.18L491.63 435.62L492.60 435.62L492.60 436.99L493.58 436.99L493.58 437.90L494.56 437.90L494.56 439.82L495.53 439.82L495.53 440.33L496.51 440.33L496.51 442.63L497.49 442.63L497.49 445.52L498.46 445.52L498.46 448.06L499.44 448.06L499.44 449.46L500.42 449.46L500.42 451.48L501.40 451.48L501.40 452.44L502.37 452.44L502.37 452.90L503.35 452.90L503.35 453.31L504.33 453.31L504.33 453.91L505.30 453.91L505.30 454.11L506.28 454.11L506.28 454.23L507.26 454.23L507.26 454.33L508.23 454.33L508.23 454.47L509.21 454.47L509.21 454.60L510.19 454.60L510.19 454.76L511.17 454.76L511.17 454.87L512.14 454.87L512.14 454.97L513.12 454.97L513.12 455.05L514.10 455.05L514.10 455.15L515.07 455.15L515.07 455.25L516.05 455.25L516.05 455.30Z" fill="#0000ff"/><rect x="413.45" y="249.30" width="107.50" height="206.00" fill="none" stroke="#555" stroke-width="0.650"/><path d="M413.45 455.30h-2" stroke="#444" stroke-width="0.500"/><text x="408.85" y="458.00" font-size="5.400" fill="#333" text-anchor="end">0</text><path d="M413.45 423.12h-2" stroke="#444" stroke-width="0.500"/><text x="408.85" y="425.82" font-size="5.400" fill="#333" text-anchor="end">200</text><path d="M413.45 390.93h-2" stroke="#444" stroke-width="0.500"/><text x="408.85" y="393.63" font-size="5.400" fill="#333" text-anchor="end">400</text><path d="M413.45 358.75h-2" stroke="#444" stroke-width="0.500"/><text x="408.85" y="361.45" font-size="5.400" fill="#333" text-anchor="end">600</text><path d="M413.45 326.57h-2" stroke="#444" stroke-width="0.500"/><text x="408.85" y="329.27" font-size="5.400" fill="#333" text-anchor="end">800</text><path d="M413.45 294.38h-2" stroke="#444" stroke-width="0.500"/><text x="408.85" y="297.08" font-size="5.400" fill="#333" text-anchor="end">1000</text><path d="M413.45 262.20h-2" stroke="#444" stroke-width="0.500"/><text x="408.85" y="264.90" font-size="5.400" fill="#333" text-anchor="end">1200</text><path d="M418.35 455.30v2" stroke="#444" stroke-width="0.500"/><text x="418.35" y="464.00" font-size="5.400" fill="#333" text-anchor="middle">0.0</text><path d="M437.89 455.30v2" stroke="#444" stroke-width="0.500"/><text x="437.89" y="464.00" font-size="5.400" fill="#333" text-anchor="middle">0.2</text><path d="M457.43 455.30v2" stroke="#444" stroke-width="0.500"/><text x="457.43" y="464.00" font-size="5.400" fill="#333" text-anchor="middle">0.4</text><path d="M476.97 455.30v2" stroke="#444" stroke-width="0.500"/><text x="476.97" y="464.00" font-size="5.400" fill="#333" text-anchor="middle">0.6</text><path d="M496.51 455.30v2" stroke="#444" stroke-width="0.500"/><text x="496.51" y="464.00" font-size="5.400" fill="#333" text-anchor="middle">0.8</text><path d="M516.05 455.30v2" stroke="#444" stroke-width="0.500"/><text x="516.05" y="464.00" font-size="5.400" fill="#333" text-anchor="middle">1.0</text><text transform="translate(391.75 353.80) rotate(-90)" font-size="5.200" fill="#333" text-anchor="middle">Frequency</text><rect x="471.45" y="251.80" width="47" height="10" rx="1" fill="#fff" stroke="#ddd" stroke-width="0.500"/><rect x="473.95" y="255.40" width="11" height="3" fill="#0000ff"/><text x="488.95" y="259.00" font-size="5.400" fill="#333">Feature 8</text><path d="M546.30 455.30L546.30 392.45L547.28 392.45L547.28 362.56L548.25 362.56L548.25 283.08L549.23 283.08L549.23 265.09L550.21 265.09L550.21 259.43L551.18 259.43L551.18 289.88L552.16 289.88L552.16 289.25L553.14 289.25L553.14 281.10L554.12 281.10L554.12 288.62L555.09 288.62L555.09 307.01L556.07 307.01L556.07 328.28L557.05 328.28L557.05 339.13L558.02 339.13L558.02 331.18L559.00 331.18L559.00 338.21L559.98 338.21L559.98 352.53L560.95 352.53L560.95 354.11L561.93 354.11L561.93 350.26L562.91 350.26L562.91 342.47L563.89 342.47L563.89 337.77L564.86 337.77L564.86 334.77L565.84 334.77L565.84 328.46L566.82 328.46L566.82 342.09L567.79 342.09L567.79 345.74L568.77 345.74L568.77 349.60L569.75 349.60L569.75 356.57L570.72 356.57L570.72 359.06L571.70 359.06L571.70 357.10L572.68 357.10L572.68 346.64L573.66 346.64L573.66 346.58L574.63 346.58L574.63 338.68L575.61 338.68L575.61 333.63L576.59 333.63L576.59 332.10L577.56 332.10L577.56 327.50L578.54 327.50L578.54 329.70L579.52 329.70L579.52 326.99L580.50 326.99L580.50 321.35L581.47 321.35L581.47 313.79L582.45 313.79L582.45 323.11L583.43 323.11L583.43 330.07L584.40 330.07L584.40 332.71L585.38 332.71L585.38 336.90L586.36 336.90L586.36 340.62L587.33 340.62L587.33 339.27L588.31 339.27L588.31 343.77L589.29 343.77L589.29 353.44L590.26 353.44L590.26 356.02L591.24 356.02L591.24 359.99L592.22 359.99L592.22 361.08L593.20 361.08L593.20 365.93L594.17 365.93L594.17 372.68L595.15 372.68L595.15 370.72L596.13 370.72L596.13 378.74L597.10 378.74L597.10 380.16L598.08 380.16L598.08 383.59L599.06 383.59L599.06 391.83L600.03 391.83L600.03 394.67L601.01 394.67L601.01 401.28L601.99 401.28L601.99 403.11L602.97 403.11L602.97 407.10L603.94 407.10L603.94 411.42L604.92 411.42L604.92 413.43L605.90 413.43L605.90 417.61L606.87 417.61L606.87 418.86L607.85 418.86L607.85 420.13L608.83 420.13L608.83 420.79L609.80 420.79L609.80 421.87L610.78 421.87L610.78 422.11L611.76 422.11L611.76 423.13L612.74 423.13L612.74 425.86L613.71 425.86L613.71 427.22L614.69 427.22L614.69 431.27L615.67 431.27L615.67 433.11L616.64 433.11L616.64 433.92L617.62 433.92L617.62 433.01L618.60 433.01L618.60 433.18L619.57 433.18L619.57 435.62L620.55 435.62L620.55 436.99L621.53 436.99L621.53 437.90L622.51 437.90L622.51 439.82L623.48 439.82L623.48 440.33L624.46 440.33L624.46 442.63L625.44 442.63L625.44 445.52L626.41 445.52L626.41 448.06L627.39 448.06L627.39 449.46L628.37 449.46L628.37 451.48L629.34 451.48L629.34 452.44L630.32 452.44L630.32 452.90L631.30 452.90L631.30 453.31L632.28 453.31L632.28 453.91L633.25 453.91L633.25 454.11L634.23 454.11L634.23 454.23L635.21 454.23L635.21 454.33L636.18 454.33L636.18 454.47L637.16 454.47L637.16 454.60L638.14 454.60L638.14 454.76L639.12 454.76L639.12 454.87L640.09 454.87L640.09 454.97L641.07 454.97L641.07 455.05L642.05 455.05L642.05 455.15L643.02 455.15L643.02 455.25L644.00 455.25L644.00 455.30Z" fill="#ff1900"/><rect x="541.40" y="249.30" width="107.50" height="206.00" fill="none" stroke="#555" stroke-width="0.650"/><path d="M541.40 455.30h-2" stroke="#444" stroke-width="0.500"/><text x="536.80" y="458.00" font-size="5.400" fill="#333" text-anchor="end">0</text><path d="M541.40 423.12h-2" stroke="#444" stroke-width="0.500"/><text x="536.80" y="425.82" font-size="5.400" fill="#333" text-anchor="end">200</text><path d="M541.40 390.93h-2" stroke="#444" stroke-width="0.500"/><text x="536.80" y="393.63" font-size="5.400" fill="#333" text-anchor="end">400</text><path d="M541.40 358.75h-2" stroke="#444" stroke-width="0.500"/><text x="536.80" y="361.45" font-size="5.400" fill="#333" text-anchor="end">600</text><path d="M541.40 326.57h-2" stroke="#444" stroke-width="0.500"/><text x="536.80" y="329.27" font-size="5.400" fill="#333" text-anchor="end">800</text><path d="M541.40 294.38h-2" stroke="#444" stroke-width="0.500"/><text x="536.80" y="297.08" font-size="5.400" fill="#333" text-anchor="end">1000</text><path d="M541.40 262.20h-2" stroke="#444" stroke-width="0.500"/><text x="536.80" y="264.90" font-size="5.400" fill="#333" text-anchor="end">1200</text><path d="M546.30 455.30v2" stroke="#444" stroke-width="0.500"/><text x="546.30" y="464.00" font-size="5.400" fill="#333" text-anchor="middle">0.0</text><path d="M565.84 455.30v2" stroke="#444" stroke-width="0.500"/><text x="565.84" y="464.00" font-size="5.400" fill="#333" text-anchor="middle">0.2</text><path d="M585.38 455.30v2" stroke="#444" stroke-width="0.500"/><text x="585.38" y="464.00" font-size="5.400" fill="#333" text-anchor="middle">0.4</text><path d="M604.92 455.30v2" stroke="#444" stroke-width="0.500"/><text x="604.92" y="464.00" font-size="5.400" fill="#333" text-anchor="middle">0.6</text><path d="M624.46 455.30v2" stroke="#444" stroke-width="0.500"/><text x="624.46" y="464.00" font-size="5.400" fill="#333" text-anchor="middle">0.8</text><path d="M644.00 455.30v2" stroke="#444" stroke-width="0.500"/><text x="644.00" y="464.00" font-size="5.400" fill="#333" text-anchor="middle">1.0</text><text transform="translate(519.70 353.80) rotate(-90)" font-size="5.200" fill="#333" text-anchor="middle">Frequency</text><rect x="599.40" y="251.80" width="47" height="10" rx="1" fill="#fff" stroke="#ddd" stroke-width="0.500"/><rect x="601.90" y="255.40" width="11" height="3" fill="#ff1900"/><text x="616.90" y="259.00" font-size="5.400" fill="#333">Feature 9</text></svg><div class="abs" style="left:951.6px;top:788.9px;width:652.4px;height:47px;background:#fff;overflow:hidden"><svg style="left:0;top:0" width="652.4" height="47" viewBox="0 0 652.4 47" font-family="'DejaVu Sans', 'Liberation Sans', sans-serif"><text x="343.40" y="20" font-size="18.15" fill="#222" text-anchor="middle">Feature 0 and Next Traffic Flow</text><rect x="40.50" y="24.6" width="606.500" height="40" fill="none" stroke="#333" stroke-width="0.800"/><text x="32.40" y="44.2" font-size="9.2" fill="#333" text-anchor="end">1.0</text><path d="M37.20 40.600h3.3" stroke="#333" stroke-width="0.700"/><circle cx="282.90" cy="40.500" r="0.900" fill="#bbb"/><circle cx="171.40" cy="46" r="0.900" fill="#bbb"/></svg></div><svg style="left:1606px;top:316px" width="14" height="521" viewBox="0 0 14 521"><rect x="2" y="0" width="9.500" height="521" fill="#141c24"/><path d="M3 8.500L6.800 4.500L10.600 8.500Z" fill="#4f5d6b"/><path d="M3 512L6.800 516L10.600 512Z" fill="#4f5d6b"/><rect x="2.200" y="12" width="9.200" height="114" rx="4" fill="#5f7686"/></svg><div class="abs" style="left:0px;top:839.2px;width:1623px;height:2.4px;background:#455461;"></div><div class="abs" style="left:658.6px;top:841.7px;width:83.1px;height:18px;background:#425363;border-radius:0 0 3.5px 3.5px;"></div><div class="t" style="left:662.1px;top:846px;font-size:11.6px;color:#e3e6e9;letter-spacing:-0.623px;">IPython Console</div><div class="abs" style="left:744px;top:841.7px;width:28px;height:18px;background:#425363;border-radius:0 0 3.5px 3.5px;"></div><div class="t" style="left:747.4px;top:846px;font-size:11.6px;color:#e3e6e9;letter-spacing:-0.573px;">Files</div><div class="abs" style="left:774.5px;top:841.7px;width:28px;height:18px;background:#425363;border-radius:0 0 3.5px 3.5px;"></div><div class="t" style="left:778px;top:846px;font-size:11.6px;color:#e3e6e9;letter-spacing:-1.086px;">Help</div><div class="abs" style="left:804.5px;top:841.7px;width:88.5px;height:18px;background:#425363;border-radius:0 0 3.5px 3.5px;"></div><div class="t" style="left:807.5px;top:846px;font-size:11.6px;color:#e3e6e9;letter-spacing:-0.364px;">Variable Explorer</div><div class="abs" style="left:895px;top:839.7px;width:30.8px;height:20px;background:#4a5d73;border-radius:0 0 3.5px 3.5px;border-top:3.4px solid #3292de;"></div><div class="t" style="left:898.2px;top:846px;font-size:11.6px;color:#e3e6e9;letter-spacing:-0.597px;">Plots</div><div class="abs" style="left:927px;top:841.7px;width:38.5px;height:18px;background:#425363;border-radius:0 0 3.5px 3.5px;"></div><div class="t" style="left:930.3px;top:846px;font-size:11.6px;color:#e3e6e9;letter-spacing:-0.599px;">History</div><div class="t" style="left:1046.4px;top:867.2px;font-size:11.6px;color:#e3e6e9;letter-spacing:-0.362px;">conda (Python 3.10.9)</div><div class="t" style="left:1183.3px;top:867.2px;font-size:11.6px;color:#e3e6e9;letter-spacing:-0.413px;">Completions: conda</div><div class="t" style="left:1309.3px;top:867.2px;font-size:11.6px;color:#e3e6e9;letter-spacing:-0.659px;">LSP: Python</div><div class="t" style="left:1380.2px;top:867.2px;font-size:11.6px;color:#e3e6e9;letter-spacing:-0.444px;">Line 2, Col 4</div><div class="t" style="left:1454px;top:867.2px;font-size:11.6px;color:#e3e6e9;letter-spacing:-0.866px;">UTF-8</div><div class="t" style="left:1497px;top:867.2px;font-size:11.6px;color:#e3e6e9;letter-spacing:-1.864px;">CRLF</div><div class="t" style="left:1535.2px;top:867.2px;font-size:11.6px;color:#e3e6e9;letter-spacing:-2.816px;">RW</div><svg style="left:1164.8px;top:866.6px" width="12" height="12" viewBox="0 0 24 24"><path d="M7.500 3L3.500 7L7.500 11M13 2.500L16.500 6L13 9.500" fill="none" stroke="#e3e6e9" stroke-width="2"/><path d="M7 13.500A5.500 5.500 0 0 0 18 13.500" fill="none" stroke="#e3e6e9" stroke-width="2.400"/><circle cx="19.500" cy="6.500" r="1.600" fill="#e3e6e9"/></svg><svg style="left:1290.75px;top:867.25px" width="11.5" height="11.5" viewBox="0 0 24 24"><path d="M21,7L9,19L3.5,13.5L4.91,12.09L9,16.17L19.59,5.59L21,7Z" fill="#e3e6e9" /></svg><div class="abs" style="left:1549.8px;top:844px;width:67.8px;height:33px;background:#2d2d2d;"></div><div class="abs" style="left:1558.7px;top:853.3px;width:5.3px;height:15.8px;background:#bababa;"></div><div class="abs" style="left:1568.6px;top:853.3px;width:5.3px;height:15.8px;background:#bababa;"></div><svg style="left:1590.5px;top:853px" width="20.6" height="16.6" viewBox="0 0 20.6 16.6"><rect x="0.700" y="0.700" width="19.200" height="15.200" fill="none" stroke="#a4a4a4" stroke-width="1.400"/><ellipse cx="10.300" cy="6.300" rx="2.100" ry="2.800" fill="#c8c8c8"/><path d="M4.200 15.200C5 11.800 8 11.600 9 10.500V8.500H11.600V10.500C12.600 11.600 15.600 11.800 16.400 15.200Z" fill="#c8c8c8"/></svg><svg style="left:209.500px;top:311.500px" width="14" height="21" viewBox="0 0 14 21"><path d="M1 1V16.500L4.700 13L7.300 19L9.800 17.900L7.200 12H12.300Z" fill="#fff" stroke="#111" stroke-width="1.100" stroke-linejoin="round"/></svg><svg style="left:1468.500px;top:609.500px" width="14" height="21" viewBox="0 0 14 21"><path d="M1 1V16.500L4.700 13L7.300 19L9.800 17.900L7.200 12H12.300Z" fill="#fff" stroke="#222" stroke-width="1.100" stroke-linejoin="round"/></svg></body></html>
